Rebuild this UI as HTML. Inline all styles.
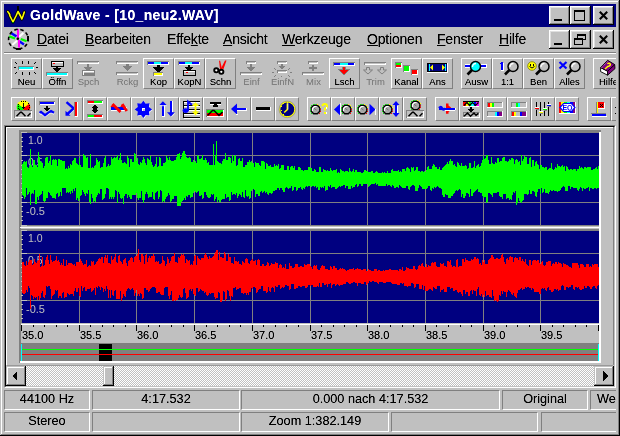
<!DOCTYPE html>
<html><head><meta charset="utf-8"><style>
html,body{margin:0;padding:0;width:620px;height:436px;overflow:hidden;background:#c0c0c0}
body{position:relative;font-family:"Liberation Sans", sans-serif}
body>div,body>svg{position:absolute}
body{will-change:transform}
u{text-decoration:underline;text-decoration-thickness:1px;text-underline-offset:1px}
</style></head><body>
<svg width="0" height="0" style="position:absolute"><filter id="th" x="-5%" y="-20%" width="110%" height="140%"><feComponentTransfer><feFuncA type="linear" slope="1.35" intercept="-0.05"/></feComponentTransfer></filter></svg>
<div style="left:0px;top:0px;width:620px;height:436px;background:#c0c0c0;"></div>
<div style="left:0;top:0;width:620px;height:436px;box-sizing:border-box;border-top:1px solid #c0c0c0;border-left:1px solid #c0c0c0;border-right:1px solid #000;border-bottom:1px solid #000"></div>
<div style="left:1px;top:1px;width:618px;height:434px;box-sizing:border-box;border-top:1px solid #fff;border-left:1px solid #fff;border-right:1px solid #808080;border-bottom:1px solid #808080"></div>
<div style="left:4px;top:4px;width:612px;height:23px;background:#000080;"></div>
<svg style="left:4px;top:4px" width="24" height="23"><polyline points="3.8,7.6 5.5,10 6,12 9,18 12,12 14,7.5 16.5,12 17.8,15 19,12 20.3,8" fill="none" stroke="#000" stroke-width="3.2" stroke-linejoin="round" stroke-linecap="round"/><line x1="14" y1="2" x2="14" y2="6" stroke="#000" stroke-width="2"/><polyline points="3.8,7.6 5.5,10 6,12 9,18 12,12 14,7.5 16.5,12 17.8,15 19,12 20.3,8" fill="none" stroke="#ff0" stroke-width="1.6" stroke-linejoin="round" stroke-linecap="round"/><rect x="8" y="18" width="2" height="1" fill="#008000"/></svg>
<div style="left:30px;top:7px;font-size:14px;line-height:16px;color:#fff;font-weight:bold;white-space:pre;filter:url(#th);letter-spacing:0.35px">GoldWave - [10_neu2.WAV]</div>
<div style="left:549px;top:6px;width:21px;height:19px;background:#c0c0c0;box-shadow:inset -1px -1px #000, inset 1px 1px #fff, inset -2px -2px #808080, inset 2px 2px #dfdfdf"></div>
<svg style="left:549px;top:6px" width="21" height="19" shape-rendering="crispEdges"><rect x="5" y="13" width="8" height="2" fill="#000"/></svg>
<div style="left:570px;top:6px;width:21px;height:19px;background:#c0c0c0;box-shadow:inset -1px -1px #000, inset 1px 1px #fff, inset -2px -2px #808080, inset 2px 2px #dfdfdf"></div>
<svg style="left:570px;top:6px" width="21" height="19" shape-rendering="crispEdges"><rect x="4.5" y="4.5" width="10" height="10" fill="none" stroke="#000" stroke-width="1"/><rect x="4" y="5" width="11" height="1" fill="#000"/></svg>
<div style="left:593px;top:6px;width:21px;height:19px;background:#c0c0c0;box-shadow:inset -1px -1px #000, inset 1px 1px #fff, inset -2px -2px #808080, inset 2px 2px #dfdfdf"></div>
<svg style="left:593px;top:6px" width="21" height="19" shape-rendering="crispEdges"><path d="M6.8 5.8 L14.2 13.2 M14.2 5.8 L6.8 13.2" stroke="#000" stroke-width="2.1" shape-rendering="auto"/></svg>
<svg style="left:6px;top:28px" width="25" height="23"><circle cx="12.4" cy="11.1" r="9.6" fill="#c8c8c8"/><path d="M13.2 9 L17.4 4.7 M6.3 16.9 L11 12.7" stroke="#fff" stroke-width="2"/><path d="M5.3 5.3 L10.5 8.4 M13.2 13.2 L18 16.4" stroke="#00f" stroke-width="2.4"/><path d="M3.2 8.4 L9 10.5 M14.8 11 L20.6 13.2" stroke="#0f0" stroke-width="2.2"/><rect x="11" y="1" width="2" height="9.5" fill="#f0f"/><rect x="12" y="12" width="2" height="7.5" fill="#f0f"/><circle cx="12.4" cy="11.1" r="9.8" fill="none" stroke="#000" stroke-width="1.6" stroke-dasharray="3.5 2.6" stroke-dashoffset="1"/><rect x="10" y="20" width="5" height="2" fill="#000"/><rect x="21" y="8" width="2" height="5" fill="#000"/><circle cx="11.8" cy="10.8" r="1.3" fill="#000"/></svg>
<div style="left:37px;top:31px;font-size:14px;line-height:16px;color:#000;font-weight:normal;white-space:pre;filter:url(#th);letter-spacing:-0.2px"><u>D</u>atei</div>
<div style="left:85px;top:31px;font-size:14px;line-height:16px;color:#000;font-weight:normal;white-space:pre;filter:url(#th);letter-spacing:-0.2px"><u>B</u>earbeiten</div>
<div style="left:167px;top:31px;font-size:14px;line-height:16px;color:#000;font-weight:normal;white-space:pre;filter:url(#th);letter-spacing:-0.2px">Effe<u>k</u>te</div>
<div style="left:223px;top:31px;font-size:14px;line-height:16px;color:#000;font-weight:normal;white-space:pre;filter:url(#th);letter-spacing:-0.2px"><u>A</u>nsicht</div>
<div style="left:282px;top:31px;font-size:14px;line-height:16px;color:#000;font-weight:normal;white-space:pre;filter:url(#th);letter-spacing:-0.2px"><u>W</u>erkzeuge</div>
<div style="left:367px;top:31px;font-size:14px;line-height:16px;color:#000;font-weight:normal;white-space:pre;filter:url(#th);letter-spacing:-0.2px"><u>O</u>ptionen</div>
<div style="left:437px;top:31px;font-size:14px;line-height:16px;color:#000;font-weight:normal;white-space:pre;filter:url(#th);letter-spacing:-0.2px"><u>F</u>enster</div>
<div style="left:499px;top:31px;font-size:14px;line-height:16px;color:#000;font-weight:normal;white-space:pre;filter:url(#th);letter-spacing:-0.2px"><u>H</u>ilfe</div>
<div style="left:549px;top:30px;width:21px;height:19px;background:#c0c0c0;box-shadow:inset -1px -1px #000, inset 1px 1px #fff, inset -2px -2px #808080, inset 2px 2px #dfdfdf"></div>
<svg style="left:549px;top:30px" width="21" height="19" shape-rendering="crispEdges"><rect x="5" y="13" width="8" height="2" fill="#000"/></svg>
<div style="left:570px;top:30px;width:21px;height:19px;background:#c0c0c0;box-shadow:inset -1px -1px #000, inset 1px 1px #fff, inset -2px -2px #808080, inset 2px 2px #dfdfdf"></div>
<svg style="left:570px;top:30px" width="21" height="19" shape-rendering="crispEdges"><rect x="7.5" y="4.5" width="8" height="5" fill="none" stroke="#000"/><rect x="7" y="5" width="9" height="1" fill="#000"/><rect x="4.5" y="8.5" width="8" height="6" fill="#c0c0c0" stroke="#000"/><rect x="4" y="9" width="9" height="1" fill="#000"/></svg>
<div style="left:593px;top:30px;width:21px;height:19px;background:#c0c0c0;box-shadow:inset -1px -1px #000, inset 1px 1px #fff, inset -2px -2px #808080, inset 2px 2px #dfdfdf"></div>
<svg style="left:593px;top:30px" width="21" height="19" shape-rendering="crispEdges"><path d="M6.8 5.8 L14.2 13.2 M14.2 5.8 L6.8 13.2" stroke="#000" stroke-width="2.1" shape-rendering="auto"/></svg>
<div style="left:4px;top:52px;width:612px;height:1px;background:#808080;"></div>
<div style="left:4px;top:53px;width:612px;height:1px;background:#fff;"></div>
<div style="left:11px;top:58px;width:31px;height:31px;box-sizing:border-box;border-top:1px solid #fff;border-left:1px solid #fff;border-right:1px solid #808080;border-bottom:1px solid #808080"></div>
<svg style="left:11px;top:58px" width="31" height="20" shape-rendering="crispEdges"><rect x="7" y="8" width="16" height="1" fill="#808080"/><rect x="7" y="8" width="1" height="4" fill="#808080"/><rect x="8" y="11" width="15" height="1" fill="#fff"/><rect x="22" y="9" width="1" height="3" fill="#fff"/><rect x="8" y="9" width="14" height="2" fill="#00ffff"/><rect x="11" y="3" width="1" height="3" fill="#000"/><rect x="17" y="3" width="1" height="3" fill="#000"/><rect x="11" y="14" width="1" height="3" fill="#000"/><rect x="18" y="14" width="1" height="3" fill="#000"/><rect x="3" y="9" width="2" height="1" fill="#000"/><rect x="25" y="9" width="2" height="1" fill="#000"/><rect x="4" y="4" width="1" height="1" fill="#000"/><rect x="5" y="5" width="1" height="1" fill="#000"/><rect x="23" y="5" width="1" height="1" fill="#000"/><rect x="24" y="4" width="1" height="1" fill="#000"/><rect x="4" y="15" width="1" height="1" fill="#000"/><rect x="5" y="14" width="1" height="1" fill="#000"/><rect x="23" y="14" width="1" height="1" fill="#000"/><rect x="24" y="15" width="1" height="1" fill="#000"/></svg>
<div style="left:11px;top:76px;width:31px;text-align:center;font-size:9.5px;line-height:11px;white-space:pre;filter:url(#th)">Neu</div>
<div style="left:42px;top:58px;width:31px;height:31px;box-sizing:border-box;border-top:1px solid #fff;border-left:1px solid #fff;border-right:1px solid #808080;border-bottom:1px solid #808080"></div>
<svg style="left:42px;top:58px" width="31" height="20" shape-rendering="crispEdges"><rect x="9" y="3" width="13" height="6" fill="#000"/><rect x="10" y="4" width="11" height="4" fill="#c0c0c0"/><rect x="10" y="4" width="11" height="1" fill="#fff"/><rect x="11" y="5" width="2" height="1" fill="#f00"/><rect x="14" y="9" width="2" height="1" fill="#000"/><rect x="11" y="10" width="8" height="1" fill="#000"/><rect x="12" y="11" width="6" height="1" fill="#000"/><rect x="13" y="12" width="4" height="1" fill="#000"/><rect x="14" y="13" width="2" height="1" fill="#000"/><rect x="4" y="14" width="22" height="1" fill="#808080"/><rect x="4" y="14" width="1" height="4" fill="#808080"/><rect x="5" y="17" width="21" height="1" fill="#fff"/><rect x="25" y="15" width="1" height="3" fill="#fff"/><rect x="5" y="15" width="20" height="2" fill="#00ffff"/></svg>
<div style="left:42px;top:76px;width:31px;text-align:center;font-size:9.5px;line-height:11px;white-space:pre;filter:url(#th)">Öffn</div>
<svg style="left:73px;top:58px" width="31" height="20" shape-rendering="crispEdges"><rect x="4" y="3" width="22" height="1" fill="#808080"/><rect x="4" y="3" width="1" height="3" fill="#808080"/><rect x="5" y="5" width="21" height="1" fill="#fff"/><rect x="25" y="4" width="1" height="2" fill="#fff"/><rect x="14" y="6" width="2" height="3" fill="#808080"/><rect x="11" y="9" width="8" height="1" fill="#808080"/><rect x="12" y="10" width="6" height="1" fill="#808080"/><rect x="13" y="11" width="4" height="1" fill="#808080"/><rect x="14" y="12" width="2" height="1" fill="#808080"/><rect x="9" y="12" width="13" height="6" fill="#808080"/><rect x="10" y="13" width="11" height="1" fill="#fff"/><rect x="10" y="13" width="1" height="4" fill="#fff"/><rect x="11" y="14" width="10" height="1" fill="#c0c0c0"/><rect x="11" y="15" width="10" height="2" fill="#808080"/></svg>
<div style="left:73px;top:76px;width:31px;text-align:center;font-size:9.5px;line-height:11px;color:#808080;white-space:pre;filter:url(#th)">Spch</div>
<svg style="left:112px;top:58px" width="31" height="20" shape-rendering="crispEdges"><rect x="4" y="3" width="22" height="1" fill="#808080"/><rect x="4" y="3" width="1" height="3" fill="#808080"/><rect x="5" y="5" width="21" height="1" fill="#fff"/><rect x="25" y="4" width="1" height="2" fill="#fff"/><rect x="14" y="6" width="3" height="2" fill="#808080"/><rect x="11" y="8" width="9" height="1" fill="#808080"/><rect x="12" y="9" width="7" height="1" fill="#808080"/><rect x="13" y="10" width="5" height="1" fill="#808080"/><rect x="14" y="11" width="3" height="1" fill="#808080"/><rect x="15" y="12" width="1" height="1" fill="#808080"/><rect x="4" y="14" width="22" height="1" fill="#808080"/><rect x="4" y="14" width="1" height="3" fill="#808080"/><rect x="5" y="16" width="21" height="1" fill="#fff"/><rect x="25" y="15" width="1" height="2" fill="#fff"/></svg>
<div style="left:112px;top:76px;width:31px;text-align:center;font-size:9.5px;line-height:11px;color:#808080;white-space:pre;filter:url(#th)">Rckg</div>
<div style="left:143px;top:58px;width:31px;height:31px;box-sizing:border-box;border-top:1px solid #fff;border-left:1px solid #fff;border-right:1px solid #808080;border-bottom:1px solid #808080"></div>
<svg style="left:143px;top:58px" width="31" height="20" shape-rendering="crispEdges"><rect x="4" y="3" width="22" height="1" fill="#808080"/><rect x="4" y="3" width="1" height="4" fill="#808080"/><rect x="5" y="6" width="21" height="1" fill="#fff"/><rect x="25" y="4" width="1" height="3" fill="#fff"/><rect x="5" y="4" width="6" height="2" fill="#0000ff"/><rect x="11" y="4" width="7" height="2" fill="#00ffff"/><rect x="18" y="4" width="7" height="2" fill="#0000ff"/><rect x="14" y="7" width="3" height="2" fill="#000"/><rect x="10" y="9" width="11" height="1" fill="#000"/><rect x="11" y="10" width="9" height="1" fill="#000"/><rect x="12" y="11" width="7" height="1" fill="#000"/><rect x="13" y="12" width="5" height="1" fill="#000"/><rect x="14" y="13" width="3" height="1" fill="#000"/><rect x="15" y="14" width="1" height="1" fill="#000"/><rect x="10" y="14" width="10" height="1" fill="#808080"/><rect x="10" y="14" width="1" height="4" fill="#808080"/><rect x="11" y="17" width="9" height="1" fill="#fff"/><rect x="19" y="15" width="1" height="3" fill="#fff"/><rect x="11" y="15" width="8" height="2" fill="#ffff00"/></svg>
<div style="left:143px;top:76px;width:31px;text-align:center;font-size:9.5px;line-height:11px;white-space:pre;filter:url(#th)">Kop</div>
<div style="left:174px;top:58px;width:31px;height:31px;box-sizing:border-box;border-top:1px solid #fff;border-left:1px solid #fff;border-right:1px solid #808080;border-bottom:1px solid #808080"></div>
<svg style="left:174px;top:58px" width="31" height="20" shape-rendering="crispEdges"><rect x="4" y="3" width="22" height="1" fill="#808080"/><rect x="4" y="3" width="1" height="4" fill="#808080"/><rect x="5" y="6" width="21" height="1" fill="#fff"/><rect x="25" y="4" width="1" height="3" fill="#fff"/><rect x="5" y="4" width="6" height="2" fill="#0000ff"/><rect x="11" y="4" width="7" height="2" fill="#00ffff"/><rect x="18" y="4" width="7" height="2" fill="#0000ff"/><rect x="14" y="7" width="2" height="2" fill="#000"/><rect x="11" y="9" width="8" height="1" fill="#000"/><rect x="12" y="10" width="6" height="1" fill="#000"/><rect x="13" y="11" width="4" height="1" fill="#000"/><rect x="14" y="12" width="2" height="1" fill="#000"/><rect x="9" y="12" width="13" height="6" fill="#000"/><rect x="10" y="13" width="11" height="4" fill="#c0c0c0"/><rect x="10" y="13" width="11" height="1" fill="#fff"/><rect x="12" y="14" width="2" height="1" fill="#f00"/></svg>
<div style="left:174px;top:76px;width:31px;text-align:center;font-size:9.5px;line-height:11px;white-space:pre;filter:url(#th)">KopN</div>
<div style="left:205px;top:58px;width:31px;height:31px;box-sizing:border-box;border-top:1px solid #fff;border-left:1px solid #fff;border-right:1px solid #808080;border-bottom:1px solid #808080"></div>
<svg style="left:205px;top:58px" width="31" height="20" shape-rendering="crispEdges"><g shape-rendering="auto"><path d="M14 2.5 L15.2 3 L17 11 L15 11 Z" fill="#f00"/><path d="M21.5 2.5 L18.5 11 L16 10.5 L20 2.5 Z" fill="#f00"/><circle cx="11.3" cy="12.3" r="2.1" fill="#fff" stroke="#000" stroke-width="1.9"/><circle cx="16.3" cy="13.8" r="2.1" fill="#fff" stroke="#000" stroke-width="1.9"/></g></svg>
<div style="left:205px;top:76px;width:31px;text-align:center;font-size:9.5px;line-height:11px;white-space:pre;filter:url(#th)">Schn</div>
<svg style="left:236px;top:58px" width="31" height="20" shape-rendering="crispEdges"><rect x="10" y="3" width="10" height="1" fill="#808080"/><rect x="10" y="3" width="1" height="3" fill="#808080"/><rect x="11" y="5" width="9" height="1" fill="#fff"/><rect x="19" y="4" width="1" height="2" fill="#fff"/><rect x="14" y="6" width="2" height="3" fill="#808080"/><rect x="11" y="9" width="8" height="1" fill="#808080"/><rect x="12" y="10" width="6" height="1" fill="#808080"/><rect x="13" y="11" width="4" height="1" fill="#808080"/><rect x="14" y="12" width="2" height="1" fill="#808080"/><rect x="4" y="14" width="22" height="1" fill="#808080"/><rect x="4" y="14" width="1" height="3" fill="#808080"/><rect x="5" y="16" width="21" height="1" fill="#fff"/><rect x="25" y="15" width="1" height="2" fill="#fff"/></svg>
<div style="left:236px;top:76px;width:31px;text-align:center;font-size:9.5px;line-height:11px;color:#808080;white-space:pre;filter:url(#th)">Einf</div>
<svg style="left:267px;top:58px" width="31" height="20" shape-rendering="crispEdges"><rect x="10" y="3" width="10" height="1" fill="#808080"/><rect x="10" y="3" width="1" height="3" fill="#808080"/><rect x="11" y="5" width="9" height="1" fill="#fff"/><rect x="19" y="4" width="1" height="2" fill="#fff"/><rect x="14" y="6" width="2" height="2" fill="#808080"/><rect x="12" y="8" width="6" height="1" fill="#808080"/><rect x="13" y="9" width="4" height="1" fill="#808080"/><rect x="14" y="10" width="2" height="1" fill="#808080"/><rect x="10" y="12" width="10" height="1" fill="#808080"/><rect x="10" y="12" width="1" height="3" fill="#808080"/><rect x="11" y="14" width="9" height="1" fill="#fff"/><rect x="19" y="13" width="1" height="2" fill="#fff"/><rect x="5" y="14" width="2" height="1" fill="#808080"/><rect x="23" y="14" width="2" height="1" fill="#808080"/><rect x="7" y="10" width="1" height="1" fill="#808080"/><rect x="8" y="11" width="1" height="1" fill="#808080"/><rect x="22" y="10" width="1" height="1" fill="#808080"/><rect x="21" y="11" width="1" height="1" fill="#808080"/><rect x="7" y="18" width="1" height="1" fill="#808080"/><rect x="8" y="17" width="1" height="1" fill="#808080"/><rect x="22" y="18" width="1" height="1" fill="#808080"/><rect x="21" y="17" width="1" height="1" fill="#808080"/><rect x="14" y="18" width="1" height="1" fill="#808080"/></svg>
<div style="left:267px;top:76px;width:31px;text-align:center;font-size:9.5px;line-height:11px;color:#808080;white-space:pre;filter:url(#th)">EinfN</div>
<svg style="left:298px;top:58px" width="31" height="20" shape-rendering="crispEdges"><rect x="10" y="3" width="10" height="1" fill="#808080"/><rect x="10" y="3" width="1" height="3" fill="#808080"/><rect x="11" y="5" width="9" height="1" fill="#fff"/><rect x="19" y="4" width="1" height="2" fill="#fff"/><rect x="14" y="7" width="2" height="6" fill="#808080"/><rect x="11" y="9" width="8" height="2" fill="#808080"/><rect x="4" y="14" width="22" height="1" fill="#808080"/><rect x="4" y="14" width="1" height="3" fill="#808080"/><rect x="5" y="16" width="21" height="1" fill="#fff"/><rect x="25" y="15" width="1" height="2" fill="#fff"/></svg>
<div style="left:298px;top:76px;width:31px;text-align:center;font-size:9.5px;line-height:11px;color:#808080;white-space:pre;filter:url(#th)">Mix</div>
<div style="left:329px;top:58px;width:31px;height:31px;box-sizing:border-box;border-top:1px solid #fff;border-left:1px solid #fff;border-right:1px solid #808080;border-bottom:1px solid #808080"></div>
<svg style="left:329px;top:58px" width="31" height="20" shape-rendering="crispEdges"><rect x="4" y="4" width="22" height="1" fill="#808080"/><rect x="4" y="4" width="1" height="4" fill="#808080"/><rect x="5" y="7" width="21" height="1" fill="#fff"/><rect x="25" y="5" width="1" height="3" fill="#fff"/><rect x="5" y="5" width="6" height="2" fill="#0000ff"/><rect x="11" y="5" width="8" height="2" fill="#00ffff"/><rect x="19" y="5" width="6" height="2" fill="#0000ff"/><rect x="13" y="9" width="4" height="3" fill="#808080"/><rect x="9" y="11" width="12" height="1" fill="#808080"/><rect x="10" y="12" width="10" height="1" fill="#808080"/><rect x="11" y="13" width="8" height="1" fill="#808080"/><rect x="12" y="14" width="6" height="1" fill="#808080"/><rect x="13" y="15" width="4" height="1" fill="#808080"/><rect x="14" y="16" width="2" height="1" fill="#808080"/><rect x="14" y="9" width="2" height="3" fill="#f00"/><rect x="11" y="12" width="8" height="1" fill="#f00"/><rect x="12" y="13" width="6" height="1" fill="#f00"/><rect x="13" y="14" width="4" height="1" fill="#f00"/><rect x="14" y="15" width="2" height="1" fill="#f00"/></svg>
<div style="left:329px;top:76px;width:31px;text-align:center;font-size:9.5px;line-height:11px;white-space:pre;filter:url(#th)">Lsch</div>
<svg style="left:360px;top:58px" width="31" height="20" shape-rendering="crispEdges"><rect x="4" y="4" width="22" height="1" fill="#808080"/><rect x="4" y="4" width="1" height="3" fill="#808080"/><rect x="5" y="6" width="21" height="1" fill="#fff"/><rect x="25" y="5" width="1" height="2" fill="#fff"/><g shape-rendering="auto"><path d="M6.5 9.5 h3 v2.5 h3 l-4.5 4 l-4.5 -4 h3 z M20.5 9.5 h3 v2.5 h3 l-4.5 4 l-4.5 -4 h3 z" fill="none" stroke="#808080" stroke-width="1"/></g></svg>
<div style="left:360px;top:76px;width:31px;text-align:center;font-size:9.5px;line-height:11px;color:#808080;white-space:pre;filter:url(#th)">Trim</div>
<div style="left:391px;top:58px;width:31px;height:31px;box-sizing:border-box;border-top:1px solid #fff;border-left:1px solid #fff;border-right:1px solid #808080;border-bottom:1px solid #808080"></div>
<svg style="left:391px;top:58px" width="31" height="20" shape-rendering="crispEdges"><rect x="4" y="4" width="7" height="1" fill="#808080"/><rect x="4" y="4" width="1" height="6" fill="#808080"/><rect x="5" y="9" width="6" height="1" fill="#fff"/><rect x="10" y="5" width="1" height="5" fill="#fff"/><rect x="5" y="5" width="5" height="2" fill="#00ff00"/><rect x="5" y="7" width="5" height="2" fill="#f00"/><rect x="12" y="7" width="7" height="1" fill="#808080"/><rect x="12" y="7" width="1" height="7" fill="#808080"/><rect x="13" y="13" width="6" height="1" fill="#fff"/><rect x="18" y="8" width="1" height="6" fill="#fff"/><rect x="13" y="8" width="5" height="5" fill="#00ff00"/><rect x="13" y="8" width="5" height="5" fill="#00ff00"/><rect x="20" y="11" width="7" height="1" fill="#808080"/><rect x="20" y="11" width="1" height="6" fill="#808080"/><rect x="21" y="16" width="6" height="1" fill="#fff"/><rect x="26" y="12" width="1" height="5" fill="#fff"/><rect x="21" y="12" width="5" height="4" fill="#f00"/><rect x="21" y="12" width="5" height="4" fill="#f00"/></svg>
<div style="left:391px;top:76px;width:31px;text-align:center;font-size:9.5px;line-height:11px;white-space:pre;filter:url(#th)">Kanal</div>
<div style="left:422px;top:58px;width:31px;height:31px;box-sizing:border-box;border-top:1px solid #fff;border-left:1px solid #fff;border-right:1px solid #808080;border-bottom:1px solid #808080"></div>
<svg style="left:422px;top:58px" width="31" height="20" shape-rendering="crispEdges"><rect x="5" y="5" width="21" height="10" fill="#fff"/><rect x="5" y="5" width="20" height="9" fill="#000"/><rect x="6" y="6" width="19" height="7" fill="#000080"/><rect x="7" y="6" width="1" height="7" fill="#00ffff"/><rect x="23" y="6" width="1" height="7" fill="#00ffff"/><path d="M8 9.5 L11 6.5 L11 12.5 Z M23 9.5 L20 6.5 L20 12.5 Z" fill="#ff0" shape-rendering="auto"/></svg>
<div style="left:422px;top:76px;width:31px;text-align:center;font-size:9.5px;line-height:11px;white-space:pre;filter:url(#th)">Ans</div>
<div style="left:461px;top:58px;width:31px;height:31px;box-sizing:border-box;border-top:1px solid #fff;border-left:1px solid #fff;border-right:1px solid #808080;border-bottom:1px solid #808080"></div>
<svg style="left:461px;top:58px" width="31" height="20" shape-rendering="crispEdges"><rect x="4" y="6" width="22" height="4" fill="#fff"/><rect x="4" y="7" width="21" height="2" fill="#0000ff"/><g shape-rendering="auto"><line x1="11.0" y1="12.0" x2="6.5" y2="16.5" stroke="#000" stroke-width="2.6"/><circle cx="14.5" cy="8.5" r="5" fill="#00ffff" stroke="#000" stroke-width="1.5"/><path d="M11.5 9.0 A3.2 3.2 0 0 1 15.0 5.5" stroke="#fff" stroke-width="1.3" fill="none"/></g></svg>
<div style="left:461px;top:76px;width:31px;text-align:center;font-size:9.5px;line-height:11px;white-space:pre;filter:url(#th)">Ausw</div>
<div style="left:492px;top:58px;width:31px;height:31px;box-sizing:border-box;border-top:1px solid #fff;border-left:1px solid #fff;border-right:1px solid #808080;border-bottom:1px solid #808080"></div>
<svg style="left:492px;top:58px" width="31" height="20" shape-rendering="crispEdges"><rect x="9" y="4" width="2" height="8" fill="#0000ff"/><rect x="8" y="5" width="1" height="1" fill="#0000ff"/><rect x="11" y="5" width="1" height="7" fill="#fff"/><rect x="9" y="12" width="3" height="1" fill="#fff"/><g shape-rendering="auto"><line x1="17.5" y1="12.0" x2="13" y2="16.5" stroke="#000" stroke-width="2.6"/><circle cx="21" cy="8.5" r="5" fill="#c0c0c0" stroke="#000" stroke-width="1.5"/><path d="M18 9.0 A3.2 3.2 0 0 1 21.5 5.5" stroke="#fff" stroke-width="1.3" fill="none"/></g></svg>
<div style="left:492px;top:76px;width:31px;text-align:center;font-size:9.5px;line-height:11px;white-space:pre;filter:url(#th)">1:1</div>
<div style="left:523px;top:58px;width:31px;height:31px;box-sizing:border-box;border-top:1px solid #fff;border-left:1px solid #fff;border-right:1px solid #808080;border-bottom:1px solid #808080"></div>
<svg style="left:523px;top:58px" width="31" height="20" shape-rendering="crispEdges"><g shape-rendering="auto"><circle cx="9" cy="8" r="4.3" fill="#ff0" stroke="#808000" stroke-width="0.8"/><path d="M6.5 8.5 Q9 11.5 11.5 8.5" stroke="#000" stroke-width="1" fill="none"/></g><rect x="7" y="6" width="1" height="2" fill="#000"/><rect x="10" y="6" width="1" height="2" fill="#000"/><g shape-rendering="auto"><line x1="17.5" y1="12.0" x2="13" y2="16.5" stroke="#000" stroke-width="2.6"/><circle cx="21" cy="8.5" r="5" fill="#c0c0c0" stroke="#000" stroke-width="1.5"/><path d="M18 9.0 A3.2 3.2 0 0 1 21.5 5.5" stroke="#fff" stroke-width="1.3" fill="none"/></g></svg>
<div style="left:523px;top:76px;width:31px;text-align:center;font-size:9.5px;line-height:11px;white-space:pre;filter:url(#th)">Ben</div>
<div style="left:554px;top:58px;width:31px;height:31px;box-sizing:border-box;border-top:1px solid #fff;border-left:1px solid #fff;border-right:1px solid #808080;border-bottom:1px solid #808080"></div>
<svg style="left:554px;top:58px" width="31" height="20" shape-rendering="crispEdges"><g shape-rendering="auto"><path d="M5.5 4 L12.5 10.5 M12.5 4 L5.5 10.5" stroke="#0000ff" stroke-width="2.2"/></g><g shape-rendering="auto"><line x1="17.5" y1="12.0" x2="13" y2="16.5" stroke="#000" stroke-width="2.6"/><circle cx="21" cy="8.5" r="5" fill="#c0c0c0" stroke="#000" stroke-width="1.5"/><path d="M18 9.0 A3.2 3.2 0 0 1 21.5 5.5" stroke="#fff" stroke-width="1.3" fill="none"/></g></svg>
<div style="left:554px;top:76px;width:31px;text-align:center;font-size:9.5px;line-height:11px;white-space:pre;filter:url(#th)">Alles</div>
<div style="left:593px;top:58px;width:31px;height:31px;box-sizing:border-box;border-top:1px solid #fff;border-left:1px solid #fff;border-right:1px solid #808080;border-bottom:1px solid #808080"></div>
<svg style="left:593px;top:58px" width="31" height="20" shape-rendering="crispEdges"><g shape-rendering="auto"><path d="M7.6 9.6 L14.6 13.2 L14.6 17.2 L7.6 13.6 Z" fill="#fff" stroke="#000" stroke-width="0.9"/><path d="M14.6 13.2 L21.7 6.6 L22 10.6 L14.6 17.2 Z" fill="#800080" stroke="#000" stroke-width="0.9"/><path d="M7.6 9.6 L14.6 2.3 L21.7 6.6 L14.6 13.2 Z" fill="#800080" stroke="#000" stroke-width="0.9"/><path d="M8.6 9.8 L14.4 3.6" stroke="#d0a0d0" stroke-width="0.9" stroke-dasharray="1 1"/><path d="M12 11 L14.8 8.5 Q17.8 7.6 17.3 6 Q16.5 4.6 14.3 5.6" stroke="#ff0" stroke-width="1.5" fill="none"/></g></svg>
<div style="left:593px;top:76px;width:31px;text-align:center;font-size:9.5px;line-height:11px;white-space:pre;filter:url(#th)">Hilfe</div>
<div style="left:616px;top:52px;width:4px;height:40px;background:#c0c0c0;"></div>
<div style="left:11px;top:97px;width:24px;height:24px;box-sizing:border-box;border-top:1px solid #fff;border-left:1px solid #fff;border-right:1px solid #808080;border-bottom:1px solid #808080"></div>
<svg style="left:11px;top:97px" width="24" height="24" shape-rendering="crispEdges"><clipPath id="gclip"><rect x="0" y="0" width="24" height="13"/></clipPath><clipPath id="gcirc"><circle cx="12.5" cy="10" r="6.8"/></clipPath><g shape-rendering="auto" clip-path="url(#gclip)"><g clip-path="url(#gcirc)"><rect x="4" y="2" width="17" height="12" fill="#ff0"/><path d="M12.5 11 L5 5.5 L4 5.5 L4 14 L12.5 14 Z" fill="#00ff00"/><path d="M12.5 11 L20 5.5 L21 5.5 L21 14 L12.5 14 Z" fill="#f00"/></g></g><rect x="10" y="4" width="1" height="1" fill="#000"/><rect x="12" y="4" width="1" height="1" fill="#000"/><rect x="14" y="4" width="1" height="1" fill="#000"/><rect x="7" y="7" width="1" height="1" fill="#000"/><rect x="7" y="9" width="1" height="1" fill="#000"/><rect x="7" y="11" width="1" height="1" fill="#000"/><rect x="8" y="12" width="1" height="1" fill="#000"/><rect x="17" y="6" width="1" height="1" fill="#000"/><rect x="18" y="8" width="1" height="1" fill="#000"/><rect x="18" y="10" width="1" height="1" fill="#000"/><rect x="17" y="12" width="1" height="1" fill="#000"/><rect x="12" y="6" width="1" height="6" fill="#000"/><rect x="11" y="10" width="3" height="1" fill="#000"/><rect x="3" y="13" width="18" height="1" fill="#808080"/><rect x="3" y="13" width="1" height="8" fill="#808080"/><rect x="4" y="20" width="17" height="1" fill="#fff"/><rect x="20" y="14" width="1" height="6" fill="#fff"/><g shape-rendering="auto"><polyline points="5.5,19.3 9.5,15.3 10.5,15.3 14.5,19.3" stroke="#000" stroke-width="1.5" fill="none"/><line x1="16.5" y1="19.3" x2="19.5" y2="16.3" stroke="#000" stroke-width="1.5"/></g></svg>
<div style="left:35px;top:97px;width:24px;height:24px;box-sizing:border-box;border-top:1px solid #fff;border-left:1px solid #fff;border-right:1px solid #808080;border-bottom:1px solid #808080"></div>
<svg style="left:35px;top:97px" width="24" height="24" shape-rendering="crispEdges"><rect x="4" y="4" width="16" height="1" fill="#808080"/><rect x="4" y="4" width="1" height="4" fill="#808080"/><rect x="5" y="5" width="14" height="2" fill="#0000ff"/><rect x="5" y="7" width="15" height="1" fill="#fff"/><rect x="19" y="5" width="1" height="3" fill="#fff"/><rect x="11" y="9" width="2" height="2" fill="#000"/><rect x="9" y="11" width="6" height="1" fill="#000"/><rect x="10" y="12" width="4" height="1" fill="#000"/><rect x="11" y="13" width="2" height="1" fill="#000"/><g shape-rendering="auto"><polyline points="4.5,16.8 6,15.8 10,19.2 13,16.8 16,15 19,16.8" stroke="#fff" stroke-width="2" fill="none"/><polyline points="4.5,15.8 6,14.8 10,18.2 13,15.8 16,14 19,15.8" stroke="#0000ff" stroke-width="2.2" fill="none"/></g></svg>
<div style="left:59px;top:97px;width:24px;height:24px;box-sizing:border-box;border-top:1px solid #fff;border-left:1px solid #fff;border-right:1px solid #808080;border-bottom:1px solid #808080"></div>
<svg style="left:59px;top:97px" width="24" height="24" shape-rendering="crispEdges"><g shape-rendering="auto"><polyline points="7.5,5.2 14.6,11.3 8.5,17" stroke="#fff" stroke-width="1" fill="none" transform="translate(0.8 1)"/><polyline points="7.5,5.2 14.6,11.3 8.5,17" stroke="#0000ff" stroke-width="2.4" fill="none"/><path d="M6.5 13.8 L6.5 18.8 L11.5 18.8 Z" fill="#0000ff"/></g><rect x="15" y="5" width="1" height="14" fill="#808080"/><rect x="16" y="5" width="2" height="14" fill="#f00"/><rect x="18" y="5" width="1" height="14" fill="#fff"/><rect x="16" y="19" width="3" height="1" fill="#fff"/></svg>
<div style="left:83px;top:97px;width:24px;height:24px;box-sizing:border-box;border-top:1px solid #fff;border-left:1px solid #fff;border-right:1px solid #808080;border-bottom:1px solid #808080"></div>
<svg style="left:83px;top:97px" width="24" height="24" shape-rendering="crispEdges"><rect x="4" y="3" width="16" height="1" fill="#808080"/><rect x="4" y="3" width="1" height="3" fill="#808080"/><rect x="5" y="4" width="6" height="2" fill="#f00"/><rect x="11" y="4" width="8" height="2" fill="#00ff00"/><rect x="5" y="6" width="15" height="1" fill="#fff"/><rect x="19" y="4" width="1" height="3" fill="#fff"/><rect x="11" y="8" width="2" height="1" fill="#000"/><rect x="10" y="9" width="4" height="1" fill="#000"/><rect x="9" y="10" width="6" height="1" fill="#000"/><rect x="10" y="11" width="4" height="1" fill="#000"/><rect x="10" y="12" width="4" height="1" fill="#000"/><rect x="9" y="13" width="6" height="1" fill="#000"/><rect x="10" y="14" width="4" height="1" fill="#000"/><rect x="11" y="15" width="2" height="1" fill="#000"/><rect x="4" y="17" width="16" height="1" fill="#808080"/><rect x="4" y="17" width="1" height="3" fill="#808080"/><rect x="5" y="18" width="6" height="2" fill="#00ff00"/><rect x="11" y="18" width="8" height="2" fill="#f00"/><rect x="5" y="20" width="15" height="1" fill="#fff"/><rect x="19" y="18" width="1" height="3" fill="#fff"/></svg>
<div style="left:107px;top:97px;width:24px;height:24px;box-sizing:border-box;border-top:1px solid #fff;border-left:1px solid #fff;border-right:1px solid #808080;border-bottom:1px solid #808080"></div>
<svg style="left:107px;top:97px" width="24" height="24" shape-rendering="crispEdges"><g shape-rendering="auto"><path d="M4.5 10.5 L7 8 M12.5 13.5 L16 8.3" stroke="#f00" stroke-width="2.8" fill="none"/></g><rect x="4" y="10" width="15" height="3" fill="#0000ff"/><rect x="4" y="13" width="16" height="1" fill="#fff"/><rect x="19" y="10" width="1" height="3" fill="#fff"/><g shape-rendering="auto"><path d="M6.5 8 L12.5 14 M16 8.3 L19 12.8" stroke="#f00" stroke-width="2.8" fill="none" stroke-linecap="square"/></g></svg>
<div style="left:131px;top:97px;width:24px;height:24px;box-sizing:border-box;border-top:1px solid #fff;border-left:1px solid #fff;border-right:1px solid #808080;border-bottom:1px solid #808080"></div>
<svg style="left:131px;top:97px" width="24" height="24" shape-rendering="crispEdges"><g shape-rendering="auto"><polygon points="13.00,4.30 15.30,7.46 19.15,6.85 18.54,10.70 21.70,13.00 18.54,15.30 19.15,19.15 15.30,18.54 13.00,21.70 10.70,18.54 6.85,19.15 7.46,15.30 4.30,13.00 7.46,10.70 6.85,6.85 10.70,7.46" fill="#fff"/><polygon points="12.40,3.70 14.70,6.86 18.55,6.25 17.94,10.10 21.10,12.40 17.94,14.70 18.55,18.55 14.70,17.94 12.40,21.10 10.10,17.94 6.25,18.55 6.86,14.70 3.70,12.40 6.86,10.10 6.25,6.25 10.10,6.86" fill="#0000ff"/></g><rect x="11" y="11" width="3" height="3" fill="#fff"/><rect x="12" y="12" width="2" height="2" fill="#c0c0c0"/></svg>
<div style="left:155px;top:97px;width:24px;height:24px;box-sizing:border-box;border-top:1px solid #fff;border-left:1px solid #fff;border-right:1px solid #808080;border-bottom:1px solid #808080"></div>
<svg style="left:155px;top:97px" width="24" height="24" shape-rendering="crispEdges"><rect x="8" y="8" width="1" height="11" fill="#fff"/><rect x="7" y="8" width="1" height="11" fill="#0000ff"/><rect x="8" y="8" width="1" height="11" fill="#0000ff"/><rect x="9" y="8" width="1" height="11" fill="#fff"/><rect x="7" y="19" width="3" height="1" fill="#fff"/><g shape-rendering="auto"><path d="M7.9 4.2 L11.8 8.2 L4.2 8.2 Z" fill="#0000ff"/><path d="M4.5 8.7 L11.8 8.7" stroke="#fff" stroke-width="0.8"/></g><rect x="15" y="4" width="2" height="12" fill="#0000ff"/><rect x="17" y="4" width="1" height="11" fill="#fff"/><g shape-rendering="auto"><path d="M12 15.3 L19.8 15.3 L15.9 19.5 Z" fill="#0000ff"/><path d="M16.5 19.8 L19.8 16.3" stroke="#fff" stroke-width="0.8"/></g></svg>
<div style="left:179px;top:97px;width:24px;height:24px;box-sizing:border-box;border-top:1px solid #fff;border-left:1px solid #fff;border-right:1px solid #808080;border-bottom:1px solid #808080"></div>
<svg style="left:179px;top:97px" width="24" height="24" shape-rendering="crispEdges"><rect x="4" y="4" width="1" height="17" fill="#000"/><rect x="4" y="4" width="17" height="1" fill="#000"/><rect x="5" y="5" width="16" height="1" fill="#fff"/><rect x="4" y="8" width="17" height="1" fill="#000"/><rect x="5" y="9" width="16" height="1" fill="#fff"/><rect x="4" y="12" width="17" height="1" fill="#000"/><rect x="5" y="13" width="16" height="1" fill="#fff"/><rect x="4" y="16" width="17" height="1" fill="#000"/><rect x="5" y="17" width="16" height="1" fill="#fff"/><rect x="4" y="20" width="17" height="1" fill="#000"/><rect x="5" y="21" width="16" height="1" fill="#fff"/><g shape-rendering="auto"><ellipse cx="6.6" cy="13.6" rx="3" ry="2.4" fill="#0000ff"/><path d="M9 14 L9 4.5 L12.8 7.8" stroke="#0000ff" stroke-width="1.8" fill="none"/><path d="M16.5 5.3 L20 9 L17.4 9 L17.4 14.5 L20 14.5 L16.5 18.4 L13 14.5 L15.6 14.5 L15.6 9 L13 9 Z" fill="#ff0"/></g></svg>
<div style="left:203px;top:97px;width:24px;height:24px;box-sizing:border-box;border-top:1px solid #fff;border-left:1px solid #fff;border-right:1px solid #808080;border-bottom:1px solid #808080"></div>
<svg style="left:203px;top:97px" width="24" height="24" shape-rendering="crispEdges"><rect x="7" y="5" width="11" height="2" fill="#000"/><rect x="11" y="7" width="3" height="1" fill="#000"/><rect x="10" y="8" width="5" height="1" fill="#000"/><rect x="10" y="9" width="5" height="1" fill="#000"/><rect x="7" y="7" width="4" height="1" fill="#fff"/><rect x="14" y="7" width="4" height="1" fill="#fff"/><rect x="3" y="12" width="18" height="1" fill="#808080"/><rect x="3" y="12" width="1" height="8" fill="#808080"/><rect x="4" y="13" width="16" height="3" fill="#00ff00"/><rect x="4" y="16" width="16" height="3" fill="#f00"/><rect x="4" y="19" width="17" height="1" fill="#fff"/><rect x="20" y="13" width="1" height="6" fill="#fff"/><g shape-rendering="auto"><polyline points="4.5,18.5 9.5,13.5 11,13.5 16,18.5 19.5,15" stroke="#000" stroke-width="1.5" fill="none"/></g></svg>
<div style="left:227px;top:97px;width:24px;height:24px;box-sizing:border-box;border-top:1px solid #fff;border-left:1px solid #fff;border-right:1px solid #808080;border-bottom:1px solid #808080"></div>
<svg style="left:227px;top:97px" width="24" height="24" shape-rendering="crispEdges"><rect x="9" y="11" width="10" height="2" fill="#0000ff"/><rect x="9" y="13" width="11" height="1" fill="#fff"/><rect x="19" y="11" width="1" height="2" fill="#fff"/><g shape-rendering="auto"><path d="M4 12 L10 6.5 L10 17.5 Z" fill="#0000ff"/></g><rect x="9" y="17" width="2" height="1" fill="#fff"/></svg>
<div style="left:251px;top:97px;width:24px;height:24px;box-sizing:border-box;border-top:1px solid #fff;border-left:1px solid #fff;border-right:1px solid #808080;border-bottom:1px solid #808080"></div>
<svg style="left:251px;top:97px" width="24" height="24" shape-rendering="crispEdges"><rect x="5" y="10" width="14" height="3" fill="#000"/><rect x="5" y="13" width="15" height="1" fill="#fff"/><rect x="19" y="10" width="1" height="3" fill="#fff"/></svg>
<div style="left:275px;top:97px;width:24px;height:24px;box-sizing:border-box;border-top:1px solid #fff;border-left:1px solid #fff;border-right:1px solid #808080;border-bottom:1px solid #808080"></div>
<svg style="left:275px;top:97px" width="24" height="24" shape-rendering="crispEdges"><g shape-rendering="auto"><circle cx="12.3" cy="12.4" r="7.6" fill="#000080" stroke="#ff0" stroke-width="1.3"/><circle cx="12.3" cy="12.4" r="8.3" fill="none" stroke="#808080" stroke-width="0.6"/><path d="M12.3 6.2 L12.3 12.6 L9.2 15.6" stroke="#ff0" stroke-width="1.4" fill="none"/><path d="M13 6.2 L13 12.6" stroke="#fff" stroke-width="0.7"/></g><rect x="12" y="5" width="1" height="1" fill="#ff0"/><rect x="16" y="6" width="1" height="1" fill="#ff0"/><rect x="19" y="9" width="1" height="1" fill="#ff0"/><rect x="19" y="13" width="1" height="1" fill="#ff0"/><rect x="17" y="17" width="1" height="1" fill="#ff0"/><rect x="12" y="19" width="1" height="1" fill="#ff0"/><rect x="8" y="17" width="1" height="1" fill="#ff0"/><rect x="6" y="13" width="1" height="1" fill="#ff0"/><rect x="6" y="9" width="1" height="1" fill="#ff0"/><rect x="8" y="6" width="1" height="1" fill="#ff0"/></svg>
<div style="left:307px;top:97px;width:24px;height:24px;box-sizing:border-box;border-top:1px solid #fff;border-left:1px solid #fff;border-right:1px solid #808080;border-bottom:1px solid #808080"></div>
<svg style="left:307px;top:97px" width="24" height="24" shape-rendering="crispEdges"><g shape-rendering="auto"><path d="M6.7 8.2 h3.6 l2.5 2.5 v3.6 l-2.5 2.5 h-3.6 l-2.5 -2.5 v-3.6 z" fill="#a8a8a8" stroke="#000" stroke-width="1.4"/><path d="M5.5 14.0 v-2.5 l2 -2 h2" stroke="#fff" stroke-width="1.2" fill="none"/><line x1="7.0" y1="11.3" x2="9.5" y2="13.0" stroke="#707070" stroke-width="1"/></g><rect x="4" y="8" width="1" height="1" fill="#00ff00"/><rect x="6" y="7" width="1" height="1" fill="#00ff00"/><rect x="8" y="7" width="1" height="1" fill="#00ff00"/><rect x="3" y="10" width="1" height="1" fill="#00ff00"/><rect x="3" y="12" width="1" height="1" fill="#00ff00"/><rect x="3" y="14" width="1" height="1" fill="#00ff00"/><rect x="4" y="16" width="1" height="1" fill="#00ff00"/><rect x="10" y="7" width="1" height="1" fill="#ff0"/><rect x="12" y="8" width="1" height="1" fill="#ff0"/><rect x="13" y="10" width="1" height="1" fill="#ff0"/><rect x="13" y="12" width="1" height="1" fill="#f00"/><rect x="13" y="14" width="1" height="1" fill="#f00"/><rect x="12" y="16" width="1" height="1" fill="#f00"/><g shape-rendering="auto"><path d="M15.5 9.2 Q15.5 7 17.8 7 Q20 7 20 9.2 Q20 10.7 18 11.7 L18 13.5" stroke="#ff0" stroke-width="2" fill="none"/></g><rect x="17" y="15" width="2" height="2" fill="#ff0"/><rect x="19" y="10" width="1" height="2" fill="#fff"/><rect x="19" y="15" width="1" height="2" fill="#fff"/></svg>
<div style="left:331px;top:97px;width:24px;height:24px;box-sizing:border-box;border-top:1px solid #fff;border-left:1px solid #fff;border-right:1px solid #808080;border-bottom:1px solid #808080"></div>
<svg style="left:331px;top:97px" width="24" height="24" shape-rendering="crispEdges"><g shape-rendering="auto"><path d="M3 12.5 L9 6.8 L9 18.2 Z" fill="#0000ff"/></g><rect x="9" y="6" width="1" height="13" fill="#fff"/><g shape-rendering="auto"><path d="M13.7 8.2 h3.6 l2.5 2.5 v3.6 l-2.5 2.5 h-3.6 l-2.5 -2.5 v-3.6 z" fill="#a8a8a8" stroke="#000" stroke-width="1.4"/><path d="M12.5 14.0 v-2.5 l2 -2 h2" stroke="#fff" stroke-width="1.2" fill="none"/><line x1="14.0" y1="11.3" x2="16.5" y2="13.0" stroke="#707070" stroke-width="1"/></g><rect x="11" y="8" width="1" height="1" fill="#00ff00"/><rect x="13" y="7" width="1" height="1" fill="#00ff00"/><rect x="15" y="7" width="1" height="1" fill="#00ff00"/><rect x="10" y="10" width="1" height="1" fill="#00ff00"/><rect x="10" y="12" width="1" height="1" fill="#00ff00"/><rect x="10" y="14" width="1" height="1" fill="#00ff00"/><rect x="11" y="16" width="1" height="1" fill="#00ff00"/><rect x="17" y="7" width="1" height="1" fill="#ff0"/><rect x="19" y="8" width="1" height="1" fill="#ff0"/><rect x="20" y="10" width="1" height="1" fill="#ff0"/><rect x="20" y="12" width="1" height="1" fill="#f00"/><rect x="20" y="14" width="1" height="1" fill="#f00"/><rect x="19" y="16" width="1" height="1" fill="#f00"/></svg>
<div style="left:355px;top:97px;width:24px;height:24px;box-sizing:border-box;border-top:1px solid #fff;border-left:1px solid #fff;border-right:1px solid #808080;border-bottom:1px solid #808080"></div>
<svg style="left:355px;top:97px" width="24" height="24" shape-rendering="crispEdges"><g shape-rendering="auto"><path d="M5.7 8.2 h3.6 l2.5 2.5 v3.6 l-2.5 2.5 h-3.6 l-2.5 -2.5 v-3.6 z" fill="#a8a8a8" stroke="#000" stroke-width="1.4"/><path d="M4.5 14.0 v-2.5 l2 -2 h2" stroke="#fff" stroke-width="1.2" fill="none"/><line x1="6.0" y1="11.3" x2="8.5" y2="13.0" stroke="#707070" stroke-width="1"/></g><rect x="3" y="8" width="1" height="1" fill="#00ff00"/><rect x="5" y="7" width="1" height="1" fill="#00ff00"/><rect x="7" y="7" width="1" height="1" fill="#00ff00"/><rect x="2" y="10" width="1" height="1" fill="#00ff00"/><rect x="2" y="12" width="1" height="1" fill="#00ff00"/><rect x="2" y="14" width="1" height="1" fill="#00ff00"/><rect x="3" y="16" width="1" height="1" fill="#00ff00"/><rect x="9" y="7" width="1" height="1" fill="#ff0"/><rect x="11" y="8" width="1" height="1" fill="#ff0"/><rect x="12" y="10" width="1" height="1" fill="#ff0"/><rect x="12" y="12" width="1" height="1" fill="#f00"/><rect x="12" y="14" width="1" height="1" fill="#f00"/><rect x="11" y="16" width="1" height="1" fill="#f00"/><g shape-rendering="auto"><path d="M20.5 12.5 L14.5 6.8 L14.5 18.2 Z" fill="#0000ff"/></g><rect x="20" y="12" width="1" height="6" fill="#fff"/></svg>
<div style="left:379px;top:97px;width:24px;height:24px;box-sizing:border-box;border-top:1px solid #fff;border-left:1px solid #fff;border-right:1px solid #808080;border-bottom:1px solid #808080"></div>
<svg style="left:379px;top:97px" width="24" height="24" shape-rendering="crispEdges"><g shape-rendering="auto"><path d="M6.7 8.2 h3.6 l2.5 2.5 v3.6 l-2.5 2.5 h-3.6 l-2.5 -2.5 v-3.6 z" fill="#a8a8a8" stroke="#000" stroke-width="1.4"/><path d="M5.5 14.0 v-2.5 l2 -2 h2" stroke="#fff" stroke-width="1.2" fill="none"/><line x1="7.0" y1="11.3" x2="9.5" y2="13.0" stroke="#707070" stroke-width="1"/></g><rect x="4" y="8" width="1" height="1" fill="#00ff00"/><rect x="6" y="7" width="1" height="1" fill="#00ff00"/><rect x="8" y="7" width="1" height="1" fill="#00ff00"/><rect x="3" y="10" width="1" height="1" fill="#00ff00"/><rect x="3" y="12" width="1" height="1" fill="#00ff00"/><rect x="3" y="14" width="1" height="1" fill="#00ff00"/><rect x="4" y="16" width="1" height="1" fill="#00ff00"/><rect x="10" y="7" width="1" height="1" fill="#ff0"/><rect x="12" y="8" width="1" height="1" fill="#ff0"/><rect x="13" y="10" width="1" height="1" fill="#ff0"/><rect x="13" y="12" width="1" height="1" fill="#f00"/><rect x="13" y="14" width="1" height="1" fill="#f00"/><rect x="12" y="16" width="1" height="1" fill="#f00"/><g shape-rendering="auto"><path d="M17 4 L20.5 8 L18 8 L18 16 L20.5 16 L17 20 L13.5 16 L16 16 L16 8 L13.5 8 Z" fill="#0000ff"/></g><rect x="18" y="9" width="1" height="7" fill="#fff"/></svg>
<div style="left:403px;top:97px;width:24px;height:24px;box-sizing:border-box;border-top:1px solid #fff;border-left:1px solid #fff;border-right:1px solid #808080;border-bottom:1px solid #808080"></div>
<svg style="left:403px;top:97px" width="24" height="24" shape-rendering="crispEdges"><g shape-rendering="auto"><path d="M10.7 4.2 h3.6 l2.5 2.5 v3.6 l-2.5 2.5 h-3.6 l-2.5 -2.5 v-3.6 z" fill="#a8a8a8" stroke="#000" stroke-width="1.4"/><path d="M9.5 10.0 v-2.5 l2 -2 h2" stroke="#fff" stroke-width="1.2" fill="none"/><line x1="11.0" y1="7.3" x2="13.5" y2="9.0" stroke="#707070" stroke-width="1"/></g><rect x="8" y="4" width="1" height="1" fill="#00ff00"/><rect x="10" y="3" width="1" height="1" fill="#00ff00"/><rect x="12" y="3" width="1" height="1" fill="#00ff00"/><rect x="7" y="6" width="1" height="1" fill="#00ff00"/><rect x="7" y="8" width="1" height="1" fill="#00ff00"/><rect x="7" y="10" width="1" height="1" fill="#00ff00"/><rect x="8" y="12" width="1" height="1" fill="#00ff00"/><rect x="14" y="3" width="1" height="1" fill="#ff0"/><rect x="16" y="4" width="1" height="1" fill="#ff0"/><rect x="17" y="6" width="1" height="1" fill="#ff0"/><rect x="17" y="8" width="1" height="1" fill="#f00"/><rect x="17" y="10" width="1" height="1" fill="#f00"/><rect x="16" y="12" width="1" height="1" fill="#f00"/><rect x="3" y="13" width="18" height="1" fill="#808080"/><rect x="3" y="13" width="1" height="8" fill="#808080"/><rect x="4" y="20" width="17" height="1" fill="#fff"/><rect x="20" y="14" width="1" height="6" fill="#fff"/><g shape-rendering="auto"><polyline points="5.5,19.3 9.5,15.3 10.5,15.3 14.5,19.3" stroke="#000" stroke-width="1.5" fill="none"/><line x1="16.5" y1="19.3" x2="19.5" y2="16.3" stroke="#000" stroke-width="1.5"/></g></svg>
<div style="left:435px;top:97px;width:24px;height:24px;box-sizing:border-box;border-top:1px solid #fff;border-left:1px solid #fff;border-right:1px solid #808080;border-bottom:1px solid #808080"></div>
<svg style="left:435px;top:97px" width="24" height="24" shape-rendering="crispEdges"><g shape-rendering="auto"><path d="M11 6.5 L13.5 6.5 L13.5 8.5 L16 10.5 L16 13 L13.5 15 L13.5 16.8 L11 16.8 Z" fill="#f00"/><path d="M4 11 Q6 8.5 7 11 Q8.5 14.5 10 11 L10 11" stroke="#0000ff" stroke-width="2.2" fill="none"/></g><rect x="4" y="11" width="16" height="2" fill="#0000ff"/><rect x="10" y="13" width="10" height="1" fill="#fff"/><rect x="20" y="11" width="1" height="2" fill="#fff"/></svg>
<div style="left:459px;top:97px;width:24px;height:24px;box-sizing:border-box;border-top:1px solid #fff;border-left:1px solid #fff;border-right:1px solid #808080;border-bottom:1px solid #808080"></div>
<svg style="left:459px;top:97px" width="24" height="24" shape-rendering="crispEdges"><rect x="4" y="4" width="16" height="1" fill="#000"/><rect x="4" y="5" width="3" height="4" fill="#f00"/><rect x="7" y="5" width="3" height="4" fill="#ff0"/><rect x="10" y="5" width="2" height="4" fill="#00ff00"/><rect x="12" y="5" width="3" height="4" fill="#00ffff"/><rect x="15" y="5" width="2" height="4" fill="#0000ff"/><rect x="17" y="5" width="3" height="4" fill="#ff00ff"/><rect x="4" y="9" width="16" height="1" fill="#fff"/><g shape-rendering="auto"><polyline points="5,8.5 8,5.5 10.5,8.5 13.5,5.5 16.5,8.5 19.5,5.5" stroke="#000" stroke-width="1.2" fill="none"/></g><rect x="11" y="10" width="2" height="2" fill="#000"/><rect x="9" y="12" width="6" height="1" fill="#000"/><rect x="10" y="13" width="4" height="1" fill="#000"/><rect x="11" y="14" width="2" height="1" fill="#000"/><rect x="4" y="15" width="16" height="1" fill="#808080"/><rect x="4" y="15" width="1" height="5" fill="#808080"/><rect x="4" y="20" width="17" height="1" fill="#fff"/><rect x="20" y="16" width="1" height="4" fill="#fff"/><g shape-rendering="auto"><polyline points="5,19.2 8.5,16 11.5,19.2 15,16 17,18.2 19.5,16.3" stroke="#000" stroke-width="1.5" fill="none"/></g></svg>
<div style="left:483px;top:97px;width:24px;height:24px;box-sizing:border-box;border-top:1px solid #fff;border-left:1px solid #fff;border-right:1px solid #808080;border-bottom:1px solid #808080"></div>
<svg style="left:483px;top:97px" width="24" height="24" shape-rendering="crispEdges"><rect x="4" y="5" width="16" height="1" fill="#808080"/><rect x="4" y="5" width="1" height="5" fill="#808080"/><rect x="5" y="6" width="2" height="4" fill="#f00"/><rect x="7" y="6" width="2" height="4" fill="#ff0"/><rect x="9" y="6" width="2" height="4" fill="#00ff00"/><rect x="11" y="6" width="8" height="4" fill="#c0c0c0"/><rect x="4" y="10" width="16" height="1" fill="#fff"/><rect x="19" y="5" width="1" height="6" fill="#fff"/><rect x="4" y="14" width="16" height="1" fill="#808080"/><rect x="4" y="14" width="1" height="5" fill="#808080"/><rect x="5" y="15" width="7" height="4" fill="#c0c0c0"/><rect x="12" y="15" width="2" height="4" fill="#00ffff"/><rect x="14" y="15" width="2" height="4" fill="#0000ff"/><rect x="16" y="15" width="3" height="4" fill="#800080"/><rect x="4" y="19" width="16" height="1" fill="#fff"/><rect x="19" y="14" width="1" height="6" fill="#fff"/></svg>
<div style="left:507px;top:97px;width:24px;height:24px;box-sizing:border-box;border-top:1px solid #fff;border-left:1px solid #fff;border-right:1px solid #808080;border-bottom:1px solid #808080"></div>
<svg style="left:507px;top:97px" width="24" height="24" shape-rendering="crispEdges"><rect x="4" y="5" width="16" height="1" fill="#808080"/><rect x="4" y="5" width="1" height="5" fill="#808080"/><rect x="5" y="6" width="4" height="4" fill="#c0c0c0"/><rect x="9" y="6" width="2" height="4" fill="#00ff00"/><rect x="11" y="6" width="2" height="4" fill="#00ffff"/><rect x="13" y="6" width="6" height="4" fill="#c0c0c0"/><rect x="4" y="10" width="16" height="1" fill="#fff"/><rect x="19" y="5" width="1" height="6" fill="#fff"/><rect x="4" y="14" width="16" height="1" fill="#808080"/><rect x="4" y="14" width="1" height="5" fill="#808080"/><rect x="5" y="15" width="2" height="4" fill="#f00"/><rect x="7" y="15" width="2" height="4" fill="#ff0"/><rect x="9" y="15" width="4" height="4" fill="#c0c0c0"/><rect x="13" y="15" width="2" height="4" fill="#0000ff"/><rect x="15" y="15" width="4" height="4" fill="#800080"/><rect x="4" y="19" width="16" height="1" fill="#fff"/><rect x="19" y="14" width="1" height="6" fill="#fff"/></svg>
<div style="left:531px;top:97px;width:24px;height:24px;box-sizing:border-box;border-top:1px solid #fff;border-left:1px solid #fff;border-right:1px solid #808080;border-bottom:1px solid #808080"></div>
<svg style="left:531px;top:97px" width="24" height="24" shape-rendering="crispEdges"><rect x="5" y="5" width="1" height="14" fill="#000"/><rect x="9" y="5" width="1" height="14" fill="#000"/><rect x="13" y="5" width="1" height="14" fill="#000"/><rect x="17" y="5" width="1" height="14" fill="#000"/><rect x="4" y="10" width="4" height="1" fill="#fff"/><rect x="4" y="11" width="4" height="1" fill="#f00"/><rect x="5" y="12" width="3" height="1" fill="#808080"/><rect x="8" y="14" width="4" height="1" fill="#fff"/><rect x="8" y="15" width="4" height="1" fill="#ff0"/><rect x="9" y="16" width="3" height="1" fill="#808080"/><rect x="12" y="11" width="4" height="1" fill="#fff"/><rect x="12" y="12" width="4" height="1" fill="#00ff00"/><rect x="13" y="13" width="3" height="1" fill="#808080"/><rect x="16" y="7" width="4" height="1" fill="#fff"/><rect x="16" y="8" width="4" height="1" fill="#0000ff"/><rect x="17" y="9" width="3" height="1" fill="#808080"/></svg>
<div style="left:555px;top:97px;width:24px;height:24px;box-sizing:border-box;border-top:1px solid #fff;border-left:1px solid #fff;border-right:1px solid #808080;border-bottom:1px solid #808080"></div>
<svg style="left:555px;top:97px" width="24" height="24" shape-rendering="crispEdges"><rect x="4" y="5" width="17" height="12" fill="#fff"/><rect x="4" y="5" width="2" height="11" fill="#f00"/><rect x="6" y="5" width="3" height="11" fill="#ff0"/><rect x="9" y="5" width="3" height="11" fill="#00ff00"/><rect x="12" y="5" width="3" height="11" fill="#00ffff"/><rect x="15" y="5" width="3" height="11" fill="#0000ff"/><rect x="18" y="5" width="2" height="11" fill="#800080"/><g shape-rendering="auto"><path d="M5 10.5 L8.5 6.5 L16.5 6.5 L20 10.5 L16.5 14.5 L8.5 14.5 Z" fill="#fff" stroke="#0000ff" stroke-width="1.2"/><text x="12.5" y="13.3" font-size="7" font-weight="bold" fill="#0000ff" text-anchor="middle" font-family="Liberation Sans">EQ</text></g></svg>
<div style="left:587px;top:97px;width:24px;height:24px;box-sizing:border-box;border-top:1px solid #fff;border-left:1px solid #fff;border-right:1px solid #808080;border-bottom:1px solid #808080"></div>
<svg style="left:587px;top:97px" width="24" height="24" shape-rendering="crispEdges"><rect x="10" y="5" width="1" height="12" fill="#ff0"/><rect x="9" y="5" width="1" height="12" fill="#808080"/><rect x="11" y="5" width="6" height="6" fill="#f00"/><rect x="11" y="11" width="6" height="1" fill="#fff"/><rect x="17" y="6" width="1" height="6" fill="#fff"/><rect x="13" y="7" width="1" height="1" fill="#000"/><rect x="15" y="7" width="1" height="1" fill="#000"/><rect x="14" y="8" width="1" height="1" fill="#000"/><rect x="13" y="9" width="1" height="1" fill="#000"/><rect x="15" y="9" width="1" height="1" fill="#000"/><rect x="5" y="17" width="14" height="2" fill="#0000ff"/><rect x="5" y="19" width="15" height="1" fill="#fff"/><rect x="4" y="16" width="15" height="1" fill="#808080"/></svg>
<div style="left:611px;top:97px;width:24px;height:24px;box-sizing:border-box;border-top:1px solid #fff;border-left:1px solid #fff;border-right:1px solid #808080;border-bottom:1px solid #808080"></div>
<svg style="left:611px;top:97px" width="24" height="24" shape-rendering="crispEdges"><rect x="4" y="10" width="1" height="1" fill="#000"/><rect x="4" y="16" width="1" height="1" fill="#000"/><rect x="5" y="17" width="1" height="1" fill="#000"/></svg>
<div style="left:4px;top:125px;width:612px;height:263px;box-sizing:border-box;border-top:1px solid #808080;border-left:1px solid #808080;border-right:1px solid #fff;border-bottom:1px solid #fff"></div>
<div style="left:5px;top:126px;width:610px;height:261px;box-sizing:border-box;border-top:1px solid #000;border-left:1px solid #000;border-right:1px solid #c0c0c0;border-bottom:1px solid #c0c0c0"></div>
<div style="left:6px;top:127px;width:607px;height:1px;background:#fff;"></div>
<div style="left:6px;top:127px;width:1px;height:238px;background:#fff;"></div>
<div style="left:613px;top:127px;width:1px;height:238px;background:#808080;"></div>
<div style="left:19px;top:130px;width:582px;height:233px;background:#c0c0c0;"></div>
<div style="left:19px;top:130px;width:582px;height:3px;background:#808080;"></div>
<div style="left:19px;top:130px;width:2px;height:233px;background:#808080;"></div>
<div style="left:599px;top:132px;width:2px;height:231px;background:#fff;"></div>
<div style="left:20px;top:361px;width:581px;height:2px;background:#fff;"></div>
<div style="left:7px;top:365px;width:606px;height:1px;background:#999;"></div>
<div style="left:21px;top:133px;width:578px;height:92px;background:#000080;"></div>
<div style="left:21px;top:133px;width:1px;height:190px;background:#808080;"></div>
<div style="left:21px;top:225px;width:578px;height:1px;background:#808080;"></div>
<div style="left:21px;top:226px;width:578px;height:1px;background:#c0c0c0;"></div>
<div style="left:20px;top:227px;width:579px;height:1px;background:#fff;"></div>
<div style="left:21px;top:228px;width:578px;height:1px;background:#c0c0c0;"></div>
<div style="left:21px;top:229px;width:578px;height:2px;background:#808080;"></div>
<div style="left:21px;top:231px;width:578px;height:92px;background:#000080;"></div>
<div style="left:21px;top:231px;width:1px;height:92px;background:#808080;"></div>
<div style="left:21px;top:323px;width:578px;height:1px;background:#c0c0c0;"></div>
<div style="left:21px;top:324px;width:578px;height:1px;background:#fff;"></div>
<svg style="left:0;top:0" width="620" height="436" shape-rendering="crispEdges">
<rect x="79" y="133" width="1" height="92" fill="#808080"/>
<rect x="136" y="133" width="1" height="92" fill="#808080"/>
<rect x="194" y="133" width="1" height="92" fill="#808080"/>
<rect x="252" y="133" width="1" height="92" fill="#808080"/>
<rect x="310" y="133" width="1" height="92" fill="#808080"/>
<rect x="367" y="133" width="1" height="92" fill="#808080"/>
<rect x="425" y="133" width="1" height="92" fill="#808080"/>
<rect x="483" y="133" width="1" height="92" fill="#808080"/>
<rect x="540" y="133" width="1" height="92" fill="#808080"/>
<rect x="21" y="155" width="578" height="1" fill="#808080"/>
<rect x="21" y="202" width="578" height="1" fill="#808080"/>
<rect x="21" y="132" width="6" height="1" fill="#c0c0c0"/>
<rect x="21" y="137" width="2" height="1" fill="#c0c0c0"/>
<rect x="21" y="141" width="2" height="1" fill="#c0c0c0"/>
<rect x="21" y="146" width="2" height="1" fill="#c0c0c0"/>
<rect x="21" y="151" width="2" height="1" fill="#c0c0c0"/>
<rect x="21" y="155" width="6" height="1" fill="#c0c0c0"/>
<rect x="21" y="160" width="2" height="1" fill="#c0c0c0"/>
<rect x="21" y="165" width="2" height="1" fill="#c0c0c0"/>
<rect x="21" y="169" width="2" height="1" fill="#c0c0c0"/>
<rect x="21" y="174" width="2" height="1" fill="#c0c0c0"/>
<rect x="21" y="178" width="6" height="1" fill="#c0c0c0"/>
<rect x="21" y="183" width="2" height="1" fill="#c0c0c0"/>
<rect x="21" y="188" width="2" height="1" fill="#c0c0c0"/>
<rect x="21" y="192" width="2" height="1" fill="#c0c0c0"/>
<rect x="21" y="197" width="2" height="1" fill="#c0c0c0"/>
<rect x="21" y="202" width="6" height="1" fill="#c0c0c0"/>
<rect x="21" y="206" width="2" height="1" fill="#c0c0c0"/>
<rect x="21" y="211" width="2" height="1" fill="#c0c0c0"/>
<rect x="21" y="216" width="2" height="1" fill="#c0c0c0"/>
<rect x="21" y="220" width="2" height="1" fill="#c0c0c0"/>
<rect x="21" y="225" width="6" height="1" fill="#c0c0c0"/>
<rect x="79" y="231" width="1" height="92" fill="#808080"/>
<rect x="136" y="231" width="1" height="92" fill="#808080"/>
<rect x="194" y="231" width="1" height="92" fill="#808080"/>
<rect x="252" y="231" width="1" height="92" fill="#808080"/>
<rect x="310" y="231" width="1" height="92" fill="#808080"/>
<rect x="367" y="231" width="1" height="92" fill="#808080"/>
<rect x="425" y="231" width="1" height="92" fill="#808080"/>
<rect x="483" y="231" width="1" height="92" fill="#808080"/>
<rect x="540" y="231" width="1" height="92" fill="#808080"/>
<rect x="21" y="253" width="578" height="1" fill="#808080"/>
<rect x="21" y="300" width="578" height="1" fill="#808080"/>
<rect x="21" y="230" width="6" height="1" fill="#c0c0c0"/>
<rect x="21" y="235" width="2" height="1" fill="#c0c0c0"/>
<rect x="21" y="239" width="2" height="1" fill="#c0c0c0"/>
<rect x="21" y="244" width="2" height="1" fill="#c0c0c0"/>
<rect x="21" y="249" width="2" height="1" fill="#c0c0c0"/>
<rect x="21" y="253" width="6" height="1" fill="#c0c0c0"/>
<rect x="21" y="258" width="2" height="1" fill="#c0c0c0"/>
<rect x="21" y="263" width="2" height="1" fill="#c0c0c0"/>
<rect x="21" y="267" width="2" height="1" fill="#c0c0c0"/>
<rect x="21" y="272" width="2" height="1" fill="#c0c0c0"/>
<rect x="21" y="276" width="6" height="1" fill="#c0c0c0"/>
<rect x="21" y="281" width="2" height="1" fill="#c0c0c0"/>
<rect x="21" y="286" width="2" height="1" fill="#c0c0c0"/>
<rect x="21" y="290" width="2" height="1" fill="#c0c0c0"/>
<rect x="21" y="295" width="2" height="1" fill="#c0c0c0"/>
<rect x="21" y="300" width="6" height="1" fill="#c0c0c0"/>
<rect x="21" y="304" width="2" height="1" fill="#c0c0c0"/>
<rect x="21" y="309" width="2" height="1" fill="#c0c0c0"/>
<rect x="21" y="314" width="2" height="1" fill="#c0c0c0"/>
<rect x="21" y="318" width="2" height="1" fill="#c0c0c0"/>
<rect x="21" y="323" width="6" height="1" fill="#c0c0c0"/></svg>
<div style="left:28px;top:134px;font-size:10.5px;line-height:12.5px;color:#c0c0c0;font-weight:normal;white-space:pre;">1.0</div>
<div style="left:28px;top:156px;font-size:10.5px;line-height:12.5px;color:#c0c0c0;font-weight:normal;white-space:pre;">0.5</div>
<div style="left:31px;top:179px;font-size:10.5px;line-height:12.5px;color:#c0c0c0;font-weight:normal;white-space:pre;">0</div>
<div style="left:26px;top:205px;font-size:11px;line-height:13px;color:#c0c0c0;font-weight:normal;white-space:pre;">-0.5</div>
<div style="left:28px;top:232px;font-size:10.5px;line-height:12.5px;color:#c0c0c0;font-weight:normal;white-space:pre;">1.0</div>
<div style="left:28px;top:254px;font-size:10.5px;line-height:12.5px;color:#c0c0c0;font-weight:normal;white-space:pre;">0.5</div>
<div style="left:31px;top:277px;font-size:10.5px;line-height:12.5px;color:#c0c0c0;font-weight:normal;white-space:pre;">0</div>
<div style="left:26px;top:303px;font-size:11px;line-height:13px;color:#c0c0c0;font-weight:normal;white-space:pre;">-0.5</div>
<svg style="left:0;top:0" width="620" height="436" shape-rendering="crispEdges">
<path d="M22 164v31M23 162v34M24 161v38M25 162v35M26 161v27M27 167v28M28 168v26M29 166v26M30 149v56M31 165v29M32 167v26M33 160v34M34 160v30M35 165v39M36 165v39M37 167v30M38 152v48M39 157v39M40 161v34M41 162v32M42 163v28M43 168v33M44 166v36M45 158v43M46 157v41M47 157v41M48 163v29M49 161v32M50 155v40M51 165v31M52 160v38M53 159v39M54 160v38M55 159v40M56 160v34M57 166v27M58 159v38M59 159v37M60 160v32M61 160v36M62 161v27M63 161v27M64 161v27M65 169v19M66 168v25M67 169v23M68 166v27M69 168v24M70 164v30M71 165v26M72 161v32M73 160v29M74 158v33M75 158v30M76 163v37M77 164v34M78 165v36M79 158v41M80 165v31M81 167v28M82 167v23M83 154v38M84 155v39M85 156v40M86 158v35M87 157v37M88 168v22M89 168v34M90 154v50M91 168v26M92 167v31M93 168v34M94 166v35M95 165v37M96 158v39M97 160v35M98 162v31M99 161v33M100 168v21M101 167v22M102 167v33M103 163v36M104 158v40M105 156v38M106 167v21M107 166v22M108 164v25M109 166v33M110 165v32M111 157v42M112 159v38M113 158v41M114 157v40M115 158v32M116 157v34M117 155v48M118 160v32M119 158v36M120 153v45M121 160v39M122 163v35M123 163v41M124 162v34M125 163v31M126 164v30M127 156v42M128 158v37M129 167v30M130 159v40M131 159v40M132 162v33M133 162v33M134 153v42M135 154v41M136 161v32M137 158v40M138 164v36M139 165v33M140 162v36M141 163v28M142 160v40M143 157v46M144 159v41M145 163v31M146 165v27M147 158v36M148 159v39M149 160v37M150 156v41M151 162v35M152 165v27M153 167v32M154 166v34M155 164v29M156 157v35M157 167v24M158 166v33M159 157v40M160 158v32M161 166v25M162 166v36M163 163v38M164 163v39M165 162v37M166 156v41M167 158v38M168 160v33M169 157v38M170 160v42M171 161v40M172 161v38M173 161v38M174 160v36M175 160v36M176 157v39M177 154v52M178 154v52M179 153v53M180 159v47M181 157v45M182 153v48M183 151v49M184 151v47M185 154v46M186 157v39M187 158v39M188 158v37M189 157v38M190 158v40M191 162v35M192 162v35M193 160v33M194 162v29M195 161v31M196 163v30M197 155v37M198 156v35M199 159v37M200 159v37M201 158v37M202 155v44M203 160v38M204 160v32M205 158v34M206 160v35M207 163v34M208 162v36M209 165v33M210 165v32M211 165v29M212 165v30M213 144v50M214 165v36M215 155v44M216 141v56M217 161v41M218 162v38M219 163v39M220 163v39M221 164v36M222 161v38M223 159v40M224 159v40M225 153v41M226 160v38M227 160v37M228 157v40M229 157v44M230 158v42M231 163v29M232 155v40M233 161v33M234 156v38M235 155v40M236 166v27M237 165v33M238 159v37M239 158v36M240 161v34M241 161v36M242 158v34M243 167v30M244 167v31M245 165v25M246 165v31M247 162v35M248 162v34M249 160v39M250 162v36M251 161v30M252 163v27M253 163v26M254 167v23M255 162v35M256 163v31M257 163v31M258 163v33M259 165v31M260 166v26M261 161v30M262 161v32M263 161v31M264 162v29M265 169v24M266 163v29M267 164v30M268 166v29M269 166v27M270 165v28M271 167v27M272 167v26M273 167v24M274 164v27M275 166v24M276 165v25M277 166v22M278 164v24M279 169v21M280 168v20M281 165v23M282 165v25M283 165v27M284 170v22M285 170v18M286 170v17M287 166v22M288 166v23M289 170v18M290 167v21M291 166v20M292 166v25M293 168v22M294 166v21M295 170v17M296 170v21M297 170v20M298 167v21M299 167v21M300 168v19M301 170v19M302 170v20M303 171v17M304 170v19M305 170v17M306 170v16M307 170v17M308 167v19M309 167v19M310 168v18M311 168v19M312 171v15M313 171v15M314 169v18M315 170v16M316 172v16M317 172v15M318 172v18M319 167v23M320 167v20M321 172v16M322 172v15M323 169v19M324 170v16M325 170v21M326 171v19M327 170v20M328 171v15M329 171v16M330 168v17M331 170v18M332 171v16M333 170v17M334 170v17M335 170v19M336 169v20M337 173v15M338 172v15M339 173v13M340 169v18M341 170v16M342 171v15M343 171v14M344 172v13M345 171v17M346 171v15M347 171v15M348 172v17M349 168v21M350 171v18M351 172v14M352 171v17M353 169v18M354 172v15M355 170v15M356 170v14M357 172v15M358 172v14M359 172v12M360 172v12M361 173v13M362 173v13M363 172v12M364 170v14M365 170v14M366 171v13M367 171v13M368 172v15M369 172v14M370 172v13M371 171v13M372 171v13M373 173v11M374 173v11M375 172v11M376 171v14M377 172v12M378 173v13M379 173v13M380 173v13M381 173v13M382 172v14M383 173v13M384 172v14M385 173v13M386 173v11M387 171v15M388 173v12M389 173v12M390 173v13M391 170v17M392 169v16M393 171v15M394 171v17M395 171v17M396 171v16M397 171v16M398 170v18M399 172v13M400 171v15M401 172v15M402 169v19M403 169v19M404 169v19M405 171v17M406 168v18M407 167v19M408 168v21M409 169v21M410 172v15M411 167v19M412 168v17M413 167v18M414 171v15M415 170v21M416 167v24M417 167v24M418 171v17M419 171v14M420 172v14M421 171v16M422 171v18M423 172v17M424 171v18M425 172v17M426 170v19M427 167v21M428 166v20M429 169v17M430 169v21M431 169v22M432 166v22M433 164v25M434 165v22M435 167v21M436 167v20M437 169v17M438 169v18M439 167v21M440 170v18M441 170v19M442 168v27M443 167v30M444 166v31M445 165v29M446 164v31M447 162v33M448 164v34M449 161v37M450 159v39M451 161v35M452 161v35M453 165v29M454 164v29M455 166v25M456 167v23M457 162v29M458 163v27M459 165v24M460 166v24M461 163v34M462 166v28M463 166v32M464 166v32M465 165v31M466 166v27M467 169v24M468 168v26M469 163v34M470 163v26M471 168v28M472 168v28M473 167v26M474 161v31M475 168v23M476 166v24M477 165v24M478 164v28M479 167v25M480 166v27M481 163v30M482 160v36M483 156v42M484 159v38M485 158v39M486 155v48M487 155v47M488 160v33M489 164v29M490 164v30M491 157v38M492 163v34M493 164v29M494 164v29M495 162v31M496 163v30M497 158v34M498 158v34M499 162v34M500 161v36M501 161v36M502 158v41M503 157v37M504 157v37M505 161v33M506 161v38M507 162v36M508 161v37M509 159v41M510 160v39M511 158v42M512 158v37M513 159v33M514 164v29M515 160v31M516 159v46M517 160v43M518 162v36M519 161v40M520 165v37M521 155v48M522 161v40M523 159v41M524 156v38M525 157v37M526 157v37M527 164v31M528 164v30M529 158v32M530 157v37M531 167v27M532 160v31M533 160v31M534 166v26M535 162v34M536 161v36M537 164v28M538 165v24M539 169v20M540 165v29M541 165v23M542 167v26M543 167v25M544 168v21M545 167v26M546 167v26M547 170v23M548 169v25M549 168v24M550 168v22M551 163v28M552 169v22M553 170v20M554 169v22M555 167v24M556 168v23M557 164v28M558 166v25M559 166v25M560 167v23M561 166v22M562 165v22M563 167v19M564 166v21M565 171v20M566 166v25M567 167v24M568 169v17M569 170v16M570 169v20M571 169v18M572 170v17M573 169v19M574 169v19M575 169v19M576 171v17M577 169v21M578 169v22M579 166v23M580 168v19M581 167v21M582 168v23M583 169v19M584 167v22M585 167v22M586 168v20M587 167v21M588 167v20M589 167v24M590 167v21M591 170v18M592 170v19M593 169v20M594 169v19M595 168v20M596 167v22M597 169v19M598 166v22" stroke="#00ff00" stroke-width="1" transform="translate(0.5 0)"/>
<path d="M22 262v31M23 262v32M24 265v29M25 266v27M26 261v29M27 265v27M28 262v24M29 260v28M30 260v49M31 260v35M32 265v31M33 264v35M34 259v38M35 262v36M36 263v34M37 261v39M38 260v36M39 254v46M40 267v31M41 266v27M42 257v34M43 266v31M44 265v33M45 260v35M46 257v29M47 255v32M48 260v26M49 264v22M50 255v34M51 260v39M52 262v34M53 261v34M54 261v33M55 260v30M56 256v35M57 261v29M58 260v38M59 262v34M60 265v31M61 263v35M62 265v28M63 259v33M64 266v32M65 266v31M66 260v37M67 265v28M68 263v31M69 263v32M70 263v31M71 263v31M72 264v30M73 265v31M74 264v27M75 266v22M76 262v30M77 262v30M78 262v26M79 262v34M80 259v38M81 261v25M82 263v28M83 265v23M84 264v23M85 264v27M86 260v31M87 267v22M88 266v23M89 265v24M90 266v22M91 261v31M92 262v29M93 261v29M94 265v23M95 264v31M96 262v25M97 261v27M98 259v27M99 258v29M100 259v31M101 257v30M102 257v31M103 263v29M104 257v32M105 255v36M106 258v28M107 255v34M108 263v35M109 263v27M110 264v34M111 256v34M112 260v35M113 259v37M114 257v34M115 254v36M116 262v37M117 263v36M118 256v43M119 255v44M120 261v30M121 262v39M122 264v34M123 260v34M124 259v37M125 258v39M126 263v28M127 266v23M128 261v27M129 260v29M130 258v32M131 257v32M132 258v30M133 262v28M134 257v39M135 256v37M136 256v34M137 254v42M138 249v45M139 260v36M140 262v31M141 254v40M142 254v45M143 256v42M144 264v24M145 255v33M146 254v36M147 262v28M148 258v34M149 256v35M150 258v31M151 256v32M152 256v31M153 254v33M154 256v31M155 262v26M156 261v32M157 262v31M158 261v31M159 264v28M160 264v30M161 263v32M162 256v39M163 260v35M164 261v27M165 266v21M166 264v23M167 257v30M168 259v37M169 263v36M170 261v34M171 257v34M172 256v45M173 256v45M174 253v47M175 262v39M176 262v38M177 263v37M178 257v41M179 258v37M180 256v41M181 254v44M182 255v42M183 254v35M184 256v32M185 263v30M186 259v40M187 260v38M188 261v36M189 260v30M190 265v24M191 264v27M192 265v24M193 261v33M194 256v39M195 255v41M196 265v23M197 256v32M198 258v34M199 259v32M200 260v29M201 258v32M202 258v33M203 258v33M204 255v38M205 253v39M206 255v40M207 257v39M208 259v36M209 256v37M210 258v36M211 258v35M212 257v36M213 256v37M214 254v43M215 252v47M216 250v48M217 250v48M218 260v32M219 252v41M220 257v45M221 257v45M222 258v42M223 258v33M224 252v40M225 254v47M226 261v38M227 261v29M228 254v37M229 257v39M230 257v44M231 263v33M232 263v34M233 264v24M234 257v31M235 261v26M236 261v29M237 262v27M238 261v28M239 264v24M240 264v24M241 265v28M242 261v32M243 262v32M244 263v30M245 259v34M246 258v37M247 259v34M248 263v32M249 264v28M250 261v31M251 260v28M252 259v30M253 261v26M254 261v26M255 260v28M256 265v28M257 260v32M258 259v31M259 260v29M260 266v23M261 266v20M262 264v22M263 264v27M264 266v25M265 266v25M266 265v28M267 262v30M268 263v24M269 266v25M270 265v27M271 263v25M272 264v23M273 264v24M274 264v28M275 262v24M276 263v24M277 263v24M278 268v17M279 265v20M280 264v25M281 265v23M282 268v19M283 267v21M284 268v19M285 264v21M286 269v16M287 269v17M288 269v17M289 263v27M290 266v23M291 266v18M292 268v16M293 268v16M294 267v22M295 264v25M296 264v24M297 264v24M298 267v19M299 267v19M300 266v21M301 266v21M302 267v19M303 267v19M304 264v22M305 265v23M306 265v23M307 264v23M308 264v21M309 264v21M310 266v20M311 267v18M312 269v16M313 266v21M314 265v22M315 266v21M316 265v22M317 269v17M318 270v17M319 270v13M320 268v19M321 266v21M322 265v18M323 266v17M324 266v19M325 269v16M326 269v15M327 269v18M328 270v14M329 270v14M330 266v17M331 267v21M332 269v16M333 266v18M334 266v18M335 268v18M336 268v17M337 270v14M338 270v15M339 269v17M340 268v17M341 269v16M342 268v17M343 269v15M344 269v15M345 270v14M346 271v11M347 270v12M348 270v13M349 269v15M350 269v15M351 269v14M352 269v14M353 268v14M354 270v12M355 269v14M356 269v14M357 268v18M358 269v14M359 269v14M360 269v14M361 270v14M362 270v14M363 269v15M364 269v13M365 269v13M366 271v14M367 271v13M368 269v14M369 270v11M370 270v12M371 271v11M372 271v10M373 271v10M374 269v13M375 269v13M376 269v13M377 271v12M378 270v14M379 270v12M380 271v11M381 271v11M382 271v11M383 270v13M384 271v12M385 270v13M386 270v12M387 270v12M388 270v12M389 269v13M390 269v13M391 270v13M392 270v14M393 270v14M394 270v14M395 270v14M396 270v14M397 270v15M398 271v14M399 269v16M400 269v14M401 270v13M402 267v17M403 271v12M404 271v15M405 270v16M406 267v19M407 268v19M408 268v18M409 269v17M410 269v17M411 269v14M412 269v14M413 266v18M414 266v22M415 269v18M416 270v14M417 269v15M418 266v18M419 265v24M420 266v23M421 264v25M422 263v22M423 266v24M424 267v19M425 267v24M426 264v27M427 267v24M428 265v25M429 266v23M430 266v23M431 263v27M432 262v29M433 263v24M434 262v26M435 262v27M436 266v23M437 267v19M438 267v19M439 267v19M440 263v29M441 264v26M442 264v26M443 263v26M444 266v26M445 266v26M446 267v25M447 261v26M448 261v26M449 262v25M450 260v29M451 265v23M452 267v21M453 266v25M454 266v25M455 267v23M456 260v30M457 259v33M458 267v26M459 266v26M460 266v26M461 266v28M462 259v37M463 259v31M464 262v28M465 258v36M466 260v32M467 260v32M468 261v35M469 261v35M470 261v30M471 259v31M472 260v34M473 259v31M474 257v34M475 257v34M476 259v37M477 258v31M478 259v28M479 264v31M480 263v33M481 265v29M482 260v37M483 262v33M484 260v37M485 264v27M486 264v32M487 264v31M488 260v35M489 259v38M490 258v39M491 255v43M492 255v35M493 257v39M494 259v42M495 259v41M496 258v43M497 258v44M498 259v42M499 259v36M500 258v38M501 255v36M502 254v40M503 257v34M504 262v30M505 264v28M506 259v38M507 258v34M508 260v30M509 257v34M510 256v36M511 257v37M512 257v38M513 262v31M514 258v38M515 257v40M516 258v40M517 258v35M518 260v30M519 257v33M520 257v32M521 261v27M522 259v31M523 261v28M524 262v27M525 259v28M526 264v24M527 265v22M528 266v21M529 260v28M530 260v28M531 265v25M532 261v27M533 260v29M534 260v32M535 260v32M536 261v31M537 260v32M538 260v32M539 263v31M540 264v30M541 262v27M542 261v27M543 265v24M544 266v22M545 265v25M546 262v29M547 262v26M548 261v26M549 261v29M550 261v29M551 266v26M552 264v28M553 263v28M554 264v25M555 262v27M556 262v28M557 264v25M558 262v29M559 263v27M560 263v27M561 264v22M562 267v18M563 263v23M564 264v26M565 264v26M566 265v22M567 265v22M568 266v22M569 267v20M570 267v20M571 268v17M572 263v22M573 263v26M574 263v27M575 263v24M576 263v24M577 263v25M578 265v22M579 268v21M580 264v26M581 264v26M582 264v25M583 265v24M584 267v19M585 267v21M586 264v24M587 264v22M588 264v22M589 267v20M590 266v23M591 267v22M592 264v23M593 265v21M594 264v22M595 264v24M596 264v25M597 264v22M598 267v18" stroke="#ff0000" stroke-width="1" transform="translate(0.5 0)"/>
</svg>
<svg style="left:0;top:0" width="620" height="436" shape-rendering="crispEdges">
<rect x="21" y="325" width="1" height="6" fill="#000"/>
<rect x="33" y="325" width="1" height="2" fill="#000"/>
<rect x="44" y="325" width="1" height="2" fill="#000"/>
<rect x="56" y="325" width="1" height="2" fill="#000"/>
<rect x="67" y="325" width="1" height="2" fill="#000"/>
<rect x="79" y="325" width="1" height="6" fill="#000"/>
<rect x="90" y="325" width="1" height="2" fill="#000"/>
<rect x="102" y="325" width="1" height="2" fill="#000"/>
<rect x="113" y="325" width="1" height="2" fill="#000"/>
<rect x="125" y="325" width="1" height="2" fill="#000"/>
<rect x="136" y="325" width="1" height="6" fill="#000"/>
<rect x="148" y="325" width="1" height="2" fill="#000"/>
<rect x="159" y="325" width="1" height="2" fill="#000"/>
<rect x="171" y="325" width="1" height="2" fill="#000"/>
<rect x="183" y="325" width="1" height="2" fill="#000"/>
<rect x="194" y="325" width="1" height="6" fill="#000"/>
<rect x="206" y="325" width="1" height="2" fill="#000"/>
<rect x="217" y="325" width="1" height="2" fill="#000"/>
<rect x="229" y="325" width="1" height="2" fill="#000"/>
<rect x="240" y="325" width="1" height="2" fill="#000"/>
<rect x="252" y="325" width="1" height="6" fill="#000"/>
<rect x="263" y="325" width="1" height="2" fill="#000"/>
<rect x="275" y="325" width="1" height="2" fill="#000"/>
<rect x="286" y="325" width="1" height="2" fill="#000"/>
<rect x="298" y="325" width="1" height="2" fill="#000"/>
<rect x="310" y="325" width="1" height="6" fill="#000"/>
<rect x="321" y="325" width="1" height="2" fill="#000"/>
<rect x="333" y="325" width="1" height="2" fill="#000"/>
<rect x="344" y="325" width="1" height="2" fill="#000"/>
<rect x="356" y="325" width="1" height="2" fill="#000"/>
<rect x="367" y="325" width="1" height="6" fill="#000"/>
<rect x="379" y="325" width="1" height="2" fill="#000"/>
<rect x="390" y="325" width="1" height="2" fill="#000"/>
<rect x="402" y="325" width="1" height="2" fill="#000"/>
<rect x="413" y="325" width="1" height="2" fill="#000"/>
<rect x="425" y="325" width="1" height="6" fill="#000"/>
<rect x="436" y="325" width="1" height="2" fill="#000"/>
<rect x="448" y="325" width="1" height="2" fill="#000"/>
<rect x="460" y="325" width="1" height="2" fill="#000"/>
<rect x="471" y="325" width="1" height="2" fill="#000"/>
<rect x="483" y="325" width="1" height="6" fill="#000"/>
<rect x="494" y="325" width="1" height="2" fill="#000"/>
<rect x="506" y="325" width="1" height="2" fill="#000"/>
<rect x="517" y="325" width="1" height="2" fill="#000"/>
<rect x="529" y="325" width="1" height="2" fill="#000"/>
<rect x="540" y="325" width="1" height="6" fill="#000"/>
<rect x="552" y="325" width="1" height="2" fill="#000"/>
<rect x="563" y="325" width="1" height="2" fill="#000"/>
<rect x="575" y="325" width="1" height="2" fill="#000"/>
<rect x="586" y="325" width="1" height="2" fill="#000"/>
<rect x="598" y="325" width="1" height="6" fill="#000"/></svg>
<div style="left:22px;top:329px;font-size:11px;line-height:13px;color:#000;font-weight:normal;white-space:pre;filter:url(#th);">35.0</div>
<div style="left:80px;top:329px;font-size:11px;line-height:13px;color:#000;font-weight:normal;white-space:pre;filter:url(#th);">35.5</div>
<div style="left:137px;top:329px;font-size:11px;line-height:13px;color:#000;font-weight:normal;white-space:pre;filter:url(#th);">36.0</div>
<div style="left:195px;top:329px;font-size:11px;line-height:13px;color:#000;font-weight:normal;white-space:pre;filter:url(#th);">36.5</div>
<div style="left:253px;top:329px;font-size:11px;line-height:13px;color:#000;font-weight:normal;white-space:pre;filter:url(#th);">37.0</div>
<div style="left:311px;top:329px;font-size:11px;line-height:13px;color:#000;font-weight:normal;white-space:pre;filter:url(#th);">37.5</div>
<div style="left:368px;top:329px;font-size:11px;line-height:13px;color:#000;font-weight:normal;white-space:pre;filter:url(#th);">38.0</div>
<div style="left:426px;top:329px;font-size:11px;line-height:13px;color:#000;font-weight:normal;white-space:pre;filter:url(#th);">38.5</div>
<div style="left:484px;top:329px;font-size:11px;line-height:13px;color:#000;font-weight:normal;white-space:pre;filter:url(#th);">39.0</div>
<div style="left:541px;top:329px;font-size:11px;line-height:13px;color:#000;font-weight:normal;white-space:pre;filter:url(#th);">39.5</div>
<div style="left:21px;top:343px;width:578px;height:18px;background:#808080;"></div>
<div style="left:99px;top:344px;width:13px;height:17px;background:#000;"></div>
<div style="left:21px;top:349px;width:578px;height:1px;background:#00ff00;"></div>
<div style="left:21px;top:354px;width:578px;height:1px;background:#ff0000;"></div>
<div style="left:21px;top:344px;width:1px;height:17px;background:#00ffff;"></div>
<div style="left:598px;top:344px;width:1px;height:17px;background:#00ffff;"></div>
<div style="left:6px;top:366px;width:607px;height:20px;background-color:#fff;background-image:linear-gradient(45deg,#c0c0c0 25%,transparent 25%,transparent 75%,#c0c0c0 75%),linear-gradient(45deg,#c0c0c0 25%,transparent 25%,transparent 75%,#c0c0c0 75%);background-size:2px 2px;background-position:0 0,1px 1px"></div>
<div style="left:6px;top:366px;width:20px;height:20px;background:#c0c0c0;box-shadow:inset -1px -1px #000, inset 1px 1px #c0c0c0, inset -2px -2px #808080, inset 2px 2px #fff"></div>
<svg style="left:6px;top:366px" width="20" height="20" shape-rendering="crispEdges"><path d="M6 10 L11 5 L11 15 Z" fill="#000"/></svg>
<div style="left:103px;top:366px;width:11px;height:20px;background:#c0c0c0;box-shadow:inset -1px -1px #000, inset 1px 1px #c0c0c0, inset -2px -2px #808080, inset 2px 2px #fff"></div>
<div style="left:594px;top:366px;width:20px;height:20px;background:#c0c0c0;box-shadow:inset -1px -1px #000, inset 1px 1px #c0c0c0, inset -2px -2px #808080, inset 2px 2px #fff"></div>
<svg style="left:594px;top:366px" width="20" height="20" shape-rendering="crispEdges"><path d="M14 10 L9 5 L9 15 Z" fill="#000"/></svg>
<div style="left:4px;top:390px;width:86px;height:20px;box-sizing:border-box;border-top:1px solid #808080;border-left:1px solid #808080;border-right:1px solid #fff;border-bottom:1px solid #fff;text-align:center;font-size:12.7px;line-height:17px;white-space:pre;overflow:hidden"><span style="display:block;filter:url(#th)">44100 Hz</span></div>
<div style="left:92px;top:390px;width:148px;height:20px;box-sizing:border-box;border-top:1px solid #808080;border-left:1px solid #808080;border-right:1px solid #fff;border-bottom:1px solid #fff;text-align:center;font-size:12.7px;line-height:17px;white-space:pre;overflow:hidden"><span style="display:block;filter:url(#th)">4:17.532</span></div>
<div style="left:241px;top:390px;width:259px;height:20px;box-sizing:border-box;border-top:1px solid #808080;border-left:1px solid #808080;border-right:1px solid #fff;border-bottom:1px solid #fff;text-align:center;font-size:12.7px;line-height:17px;white-space:pre;overflow:hidden"><span style="display:block;filter:url(#th)">0.000 nach 4:17.532</span></div>
<div style="left:502px;top:390px;width:86px;height:20px;box-sizing:border-box;border-top:1px solid #808080;border-left:1px solid #808080;border-right:1px solid #fff;border-bottom:1px solid #fff;text-align:center;font-size:12.7px;line-height:17px;white-space:pre;overflow:hidden"><span style="display:block;filter:url(#th)">Original</span></div>
<div style="left:590px;top:390px;width:60px;height:20px;box-sizing:border-box;border-top:1px solid #808080;border-left:1px solid #808080;border-right:1px solid #fff;border-bottom:1px solid #fff;text-align:center;font-size:12.7px;line-height:17px;white-space:pre;overflow:hidden"><span style="display:block;filter:url(#th)"></span></div>
<div style="left:597px;top:392px;font-size:12.7px;line-height:14.7px;color:#000;font-weight:normal;white-space:pre;filter:url(#th);">Welle</div>
<div style="left:4px;top:412px;width:86px;height:20px;box-sizing:border-box;border-top:1px solid #808080;border-left:1px solid #808080;border-right:1px solid #fff;border-bottom:1px solid #fff;text-align:center;font-size:12.7px;line-height:17px;white-space:pre;overflow:hidden"><span style="display:block;filter:url(#th)">Stereo</span></div>
<div style="left:92px;top:412px;width:148px;height:20px;box-sizing:border-box;border-top:1px solid #808080;border-left:1px solid #808080;border-right:1px solid #fff;border-bottom:1px solid #fff;text-align:center;font-size:12.7px;line-height:17px;white-space:pre;overflow:hidden"><span style="display:block;filter:url(#th)"></span></div>
<div style="left:241px;top:412px;width:148px;height:20px;box-sizing:border-box;border-top:1px solid #808080;border-left:1px solid #808080;border-right:1px solid #fff;border-bottom:1px solid #fff;text-align:center;font-size:12.7px;line-height:17px;white-space:pre;overflow:hidden"><span style="display:block;filter:url(#th)">Zoom 1:382.149</span></div>
<div style="left:391px;top:412px;width:147px;height:20px;box-sizing:border-box;border-top:1px solid #808080;border-left:1px solid #808080;border-right:1px solid #fff;border-bottom:1px solid #fff;text-align:center;font-size:12.7px;line-height:17px;white-space:pre;overflow:hidden"><span style="display:block;filter:url(#th)"></span></div>
<div style="left:541px;top:412px;width:100px;height:20px;box-sizing:border-box;border-top:1px solid #808080;border-left:1px solid #808080;border-right:1px solid #fff;border-bottom:1px solid #fff;text-align:center;font-size:12.7px;line-height:17px;white-space:pre;overflow:hidden"><span style="display:block;filter:url(#th)"></span></div>
<div style="left:616px;top:4px;width:2px;height:428px;background:#c0c0c0;"></div>
<div style="left:618px;top:1px;width:1px;height:434px;background:#808080;"></div>
<div style="left:619px;top:0px;width:1px;height:436px;background:#000;"></div>
<div style="left:4px;top:432px;width:614px;height:2px;background:#c0c0c0;"></div>
<div style="left:1px;top:434px;width:618px;height:1px;background:#808080;"></div>
<div style="left:0px;top:435px;width:620px;height:1px;background:#000;"></div>
</body></html>
